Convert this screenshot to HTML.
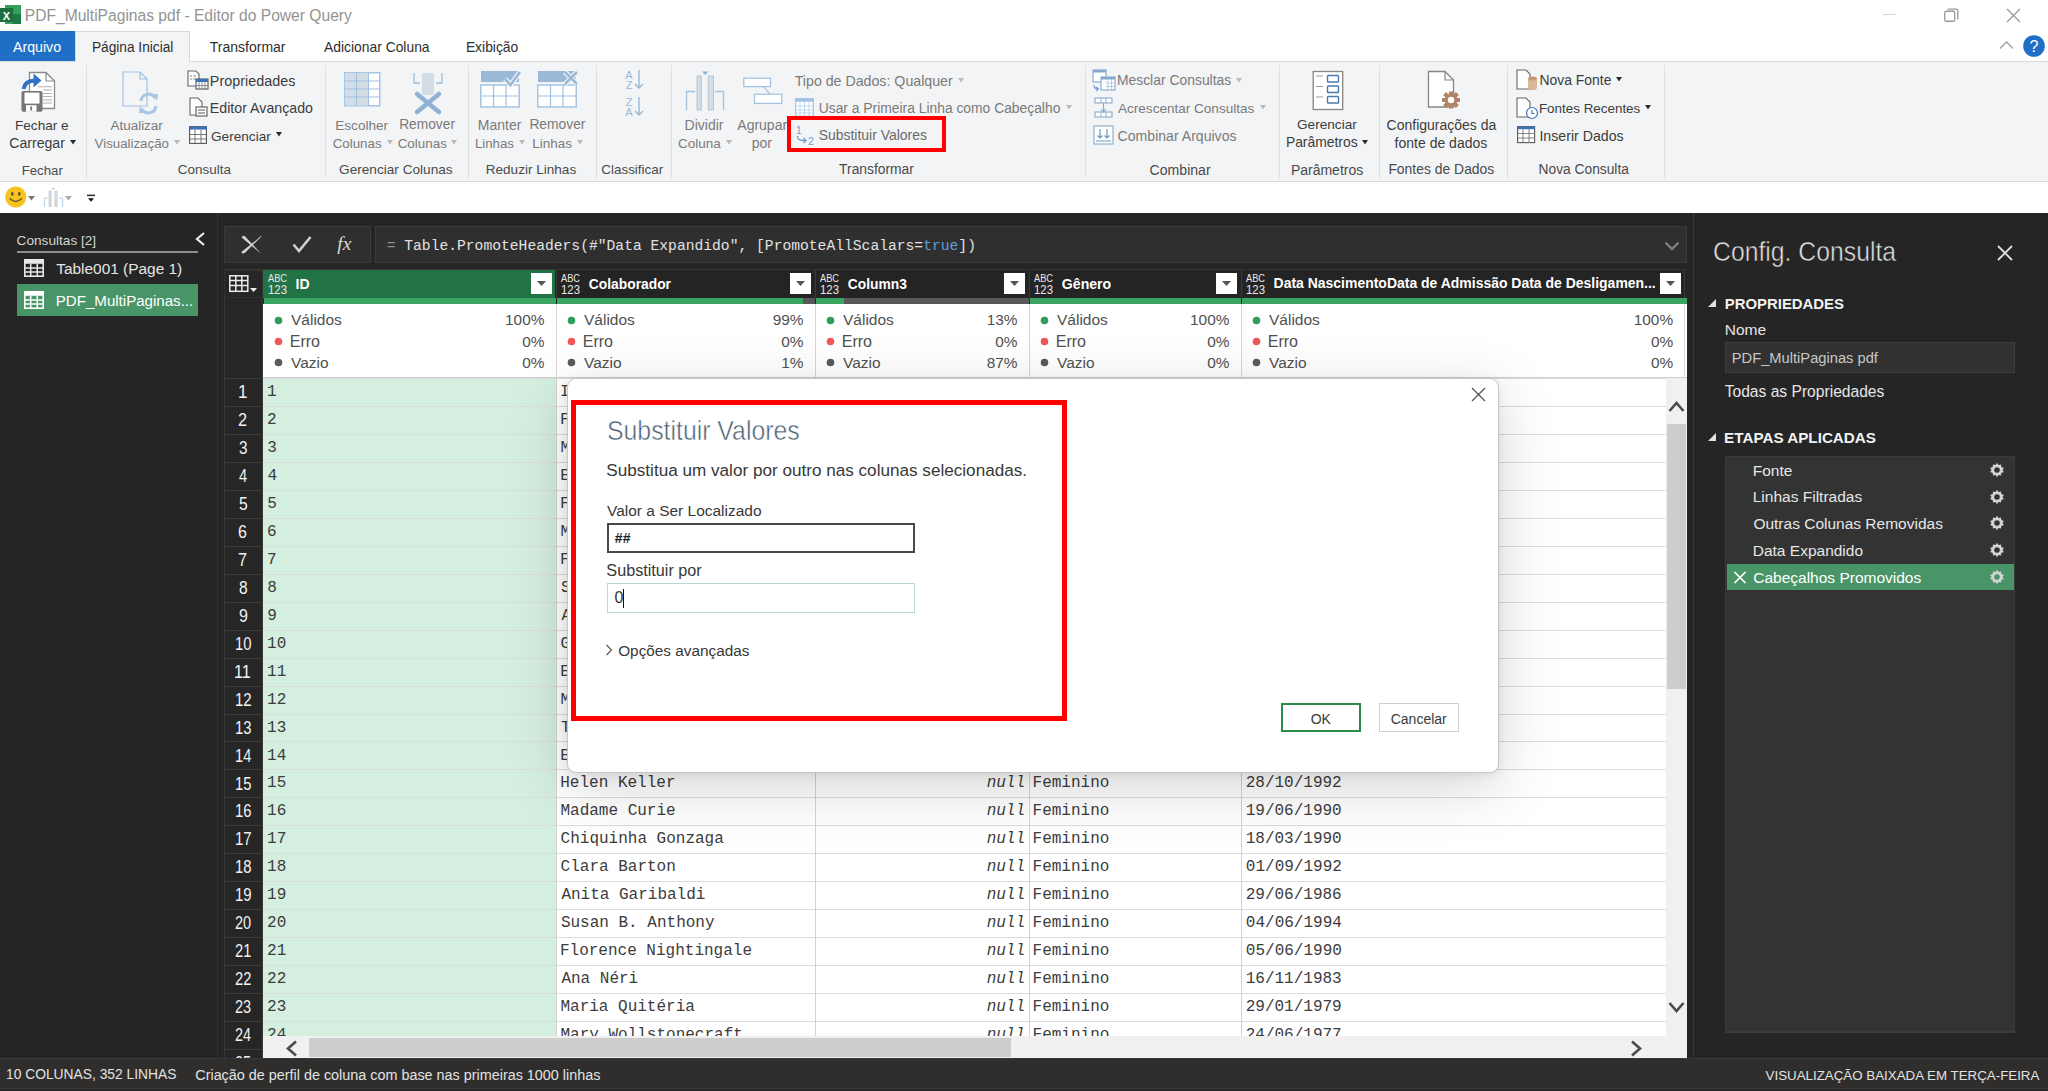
<!DOCTYPE html>
<html><head><meta charset="utf-8"><title>Power Query</title>
<style>
html,body{margin:0;padding:0;}
body{width:2048px;height:1091px;position:relative;overflow:hidden;background:#252525;font-family:"Liberation Sans",sans-serif;}
.r{position:absolute;display:block;}
.t{position:absolute;white-space:nowrap;line-height:1;}
svg.r{overflow:visible;}
</style></head><body>
<div class="r" style="left:0px;top:0px;width:2048px;height:31px;background:#ffffff;"></div>
<svg class="r" style="left:0px;top:4px;" width="22" height="22" viewBox="0 0 22 22"><rect x="5" y="1" width="16" height="19" fill="#33a05c"/><rect x="13" y="10" width="8" height="10" fill="#1e7a44"/><rect x="0" y="4" width="13" height="14" fill="#1d6f3f"/><text x="6.5" y="15.5" font-family="Liberation Sans" font-weight="bold" font-size="11" fill="#fff" text-anchor="middle">X</text></svg>
<div class="t" style="left:24.75px;top:8.28px;font-size:15.62px;color:#939393;font-weight:normal;font-style:normal;font-family:'Liberation Sans', sans-serif;">PDF_MultiPaginas pdf - Editor do Power Query</div>
<div class="r" style="left:1883px;top:14px;width:13px;height:1px;background:#d6d6d6;"></div>
<svg class="r" style="left:1944px;top:8px;" width="15" height="15" viewBox="0 0 15 15"><rect x="0.75" y="3.25" width="10" height="10" rx="1.5" fill="none" stroke="#9a9a9a" stroke-width="1.3"/><path d="M3.5 1.2 H12 Q13.8 1.2 13.8 3 V11.5" fill="none" stroke="#9a9a9a" stroke-width="1.3"/></svg>
<svg class="r" style="left:2006px;top:8px;" width="15" height="15" viewBox="0 0 15 15"><path d="M1 1 L14 14 M14 1 L1 14" stroke="#9a9a9a" stroke-width="1.3"/></svg>
<div class="r" style="left:0px;top:31px;width:2048px;height:30px;background:#ffffff;"></div>
<div class="r" style="left:0px;top:31px;width:75px;height:30px;background:#1f6fc6;"></div>
<div class="t" style="left:13.00px;top:40.31px;font-size:14.16px;color:#ffffff;font-weight:normal;font-style:normal;font-family:'Liberation Sans', sans-serif;">Arquivo</div>
<div class="r" style="left:75px;top:31px;width:115px;height:31px;background:#f3f4f6;border:1px solid #d8d8d8;border-bottom:none;box-sizing:border-box;"></div>
<div class="t" style="left:91.90px;top:40.69px;font-size:13.71px;color:#2e2e2e;font-weight:normal;font-style:normal;font-family:'Liberation Sans', sans-serif;">Página Inicial</div>
<div class="t" style="left:209.72px;top:40.43px;font-size:14.03px;color:#2e2e2e;font-weight:normal;font-style:normal;font-family:'Liberation Sans', sans-serif;">Transformar</div>
<div class="t" style="left:324.00px;top:40.57px;font-size:13.86px;color:#2e2e2e;font-weight:normal;font-style:normal;font-family:'Liberation Sans', sans-serif;">Adicionar Coluna</div>
<div class="t" style="left:465.89px;top:40.56px;font-size:13.87px;color:#2e2e2e;font-weight:normal;font-style:normal;font-family:'Liberation Sans', sans-serif;">Exibição</div>
<svg class="r" style="left:1999px;top:40px;" width="15" height="10" viewBox="0 0 15 10"><path d="M1 8.5 L7.5 2 L14 8.5" fill="none" stroke="#a0a0a0" stroke-width="1.4"/></svg>
<svg class="r" style="left:2023px;top:35px;" width="22" height="22" viewBox="0 0 22 22"><circle cx="11" cy="11" r="10.8" fill="#1f6fc6"/><text x="11" y="17" font-family="Liberation Sans" font-size="16" fill="#fff" text-anchor="middle">?</text></svg>
<div class="r" style="left:0px;top:61px;width:2048px;height:121px;background:#f3f4f6;border-top:1px solid #dcdcdc;border-bottom:1px solid #d9d9d9;box-sizing:border-box;"></div>
<div class="r" style="left:76px;top:61px;width:113px;height:1px;background:#f3f4f6;"></div>
<div class="r" style="left:86px;top:65px;width:1px;height:113px;background:#dfe0e2;"></div>
<div class="r" style="left:325px;top:65px;width:1px;height:113px;background:#dfe0e2;"></div>
<div class="r" style="left:468px;top:65px;width:1px;height:113px;background:#dfe0e2;"></div>
<div class="r" style="left:596px;top:65px;width:1px;height:113px;background:#dfe0e2;"></div>
<div class="r" style="left:671px;top:65px;width:1px;height:113px;background:#dfe0e2;"></div>
<div class="r" style="left:1085px;top:65px;width:1px;height:113px;background:#dfe0e2;"></div>
<div class="r" style="left:1279px;top:65px;width:1px;height:113px;background:#dfe0e2;"></div>
<div class="r" style="left:1379px;top:65px;width:1px;height:113px;background:#dfe0e2;"></div>
<div class="r" style="left:1507px;top:65px;width:1px;height:113px;background:#dfe0e2;"></div>
<div class="r" style="left:1664px;top:65px;width:1px;height:113px;background:#dfe0e2;"></div>
<svg class="r" style="left:18px;top:70px;" width="40" height="46" viewBox="0 0 40 46"><path d="M11.5 2.5 H28 L36.5 11 V38.5 H11.5 Z" fill="#fff" stroke="#8a8a8a" stroke-width="1.3"/><path d="M28 2.5 V11 H36.5" fill="none" stroke="#8a8a8a" stroke-width="1.2"/><path d="M20 16.7 H34 M25 20 H34 M25 23.5 H34 M25 26.5 H34 M25 30 H34 M25 33 H34" stroke="#b0b0b0" stroke-width="1.1"/><rect x="3.5" y="21" width="21" height="20.8" rx="1.8" fill="#77757a"/><rect x="6.5" y="22.6" width="15" height="11" fill="#fff"/><rect x="8" y="35.2" width="10.5" height="6.6" fill="#fff"/><rect x="12.3" y="36.5" width="1.8" height="4" fill="#77757a"/><path d="M5.5 19 Q7 10.5 17 10.5" fill="none" stroke="#2f72c2" stroke-width="3.8"/><path d="M15.5 3.5 L23.5 10.5 L15.5 17.5 Z" fill="#2f72c2"/></svg>
<div class="t" style="left:15.01px;top:118.51px;font-size:13.58px;color:#3c3c3c;font-weight:normal;font-style:normal;font-family:'Liberation Sans', sans-serif;">Fechar e</div>
<div class="t" style="left:9.30px;top:136.27px;font-size:14.09px;color:#3c3c3c;font-weight:normal;font-style:normal;font-family:'Liberation Sans', sans-serif;">Carregar</div>
<svg class="r" style="left:69.5px;top:139.5px;" width="7" height="5" viewBox="0 0 7 5"><path d="M0 0 H6 L3.0 4.5 Z" fill="#2b2b2b"/></svg>
<div class="t" style="left:21.64px;top:163.59px;font-size:13.25px;color:#4a4a4a;font-weight:normal;font-style:normal;font-family:'Liberation Sans', sans-serif;">Fechar</div>
<svg class="r" style="left:118px;top:70px;" width="44" height="46" viewBox="0 0 44 46"><path d="M5 2 H22 L29 9 V36 H5 Z" fill="none" stroke="#9fc1e3" stroke-width="1.2"/><path d="M22 2 V9 H29" fill="none" stroke="#9fc1e3" stroke-width="1.2"/><path d="M23 31 A7.5 7.5 0 0 1 37 28" fill="none" stroke="#a9c6e2" stroke-width="3"/><path d="M38 36 A7.5 7.5 0 0 1 24 39" fill="none" stroke="#a9c6e2" stroke-width="3"/><path d="M34 24 L40 24 L39 31 Z M27 43 L21 43 L22 36Z" fill="#a9c6e2"/></svg>
<div class="t" style="left:110.40px;top:118.58px;font-size:13.49px;color:#7a7a7a;font-weight:normal;font-style:normal;font-family:'Liberation Sans', sans-serif;">Atualizar</div>
<div class="t" style="left:94.60px;top:136.95px;font-size:13.29px;color:#7a7a7a;font-weight:normal;font-style:normal;font-family:'Liberation Sans', sans-serif;">Visualização</div>
<svg class="r" style="left:174.3px;top:139.5px;" width="7" height="5" viewBox="0 0 7 5"><path d="M0 0 H6 L3.0 4.5 Z" fill="#b9b9b9"/></svg>
<svg class="r" style="left:187px;top:70px;" width="22" height="20" viewBox="0 0 22 20"><path d="M1 1 H9 L12 4 V16 H1 Z" fill="#fff" stroke="#666" stroke-width="1.1"/><path d="M3 6 H5 M3 9 H5 M6 6 H9 M6 9 H9" stroke="#888" stroke-width="1"/><rect x="9" y="9" width="12" height="10" fill="#fff" stroke="#555" stroke-width="1.1"/><rect x="9" y="9" width="12" height="3" fill="#3d73b9"/><path d="M12 12 V19 M15 12 V19 M18 12 V19 M9 15.5 H21" stroke="#777" stroke-width="0.8"/></svg>
<div class="t" style="left:209.85px;top:73.72px;font-size:14.39px;color:#3c3c3c;font-weight:normal;font-style:normal;font-family:'Liberation Sans', sans-serif;">Propriedades</div>
<svg class="r" style="left:189px;top:97px;" width="20" height="21" viewBox="0 0 20 21"><path d="M1 1 H9 L13 5 V18 H1 Z" fill="#fff" stroke="#666" stroke-width="1.1"/><rect x="7" y="10" width="11" height="9" fill="#fff" stroke="#555" stroke-width="1.1"/><path d="M9 13 H16 M9 16 H16" stroke="#555" stroke-width="1"/></svg>
<div class="t" style="left:209.87px;top:101.49px;font-size:14.19px;color:#3c3c3c;font-weight:normal;font-style:normal;font-family:'Liberation Sans', sans-serif;">Editor Avançado</div>
<svg class="r" style="left:189px;top:126px;" width="18" height="18" viewBox="0 0 18 18"><rect x="0.6" y="0.6" width="16.8" height="16.8" fill="#fff" stroke="#555" stroke-width="1.1"/><rect x="0.6" y="0.6" width="16.8" height="3" fill="#3d73b9"/><path d="M6 4 V17 M12 4 V17 M1 8.5 H17 M1 13 H17" stroke="#666" stroke-width="0.9"/></svg>
<div class="t" style="left:211.02px;top:129.58px;font-size:13.61px;color:#3c3c3c;font-weight:normal;font-style:normal;font-family:'Liberation Sans', sans-serif;">Gerenciar</div>
<svg class="r" style="left:276.4px;top:132px;" width="7" height="5" viewBox="0 0 7 5"><path d="M0 0 H6 L3.0 4.5 Z" fill="#2b2b2b"/></svg>
<div class="t" style="left:177.83px;top:163.41px;font-size:13.46px;color:#4a4a4a;font-weight:normal;font-style:normal;font-family:'Liberation Sans', sans-serif;">Consulta</div>
<svg class="r" style="left:344px;top:72px;" width="38" height="36" viewBox="0 0 38 36"><rect x="0.8" y="0.8" width="35" height="33" fill="#fff" stroke="#9fc1e3" stroke-width="1.4"/><rect x="1.5" y="1.5" width="23" height="32" fill="#d3dde6"/><path d="M12.5 1 V34 M24.5 1 V34 M1 9 H36 M1 17 H36 M1 25 H36" stroke="#9fc1e3" stroke-width="1.1"/></svg>
<div class="t" style="left:335.32px;top:118.52px;font-size:13.56px;color:#7a7a7a;font-weight:normal;font-style:normal;font-family:'Liberation Sans', sans-serif;">Escolher</div>
<div class="t" style="left:332.63px;top:136.88px;font-size:13.37px;color:#7a7a7a;font-weight:normal;font-style:normal;font-family:'Liberation Sans', sans-serif;">Colunas</div>
<svg class="r" style="left:386.5px;top:139.5px;" width="7" height="5" viewBox="0 0 7 5"><path d="M0 0 H6 L3.0 4.5 Z" fill="#b9b9b9"/></svg>
<svg class="r" style="left:413px;top:72px;" width="30" height="42" viewBox="0 0 30 42"><path d="M1 1 V11 H7 M29 1 V11 H23" fill="none" stroke="#9fc1e3" stroke-width="1.4"/><rect x="9" y="1" width="12" height="22" fill="#d3dde6"/><path d="M4 22 L26 40 M26 22 L4 40" stroke="#8fb2d4" stroke-width="4.5" stroke-linecap="round"/></svg>
<div class="t" style="left:399.20px;top:118.36px;font-size:13.75px;color:#7a7a7a;font-weight:normal;font-style:normal;font-family:'Liberation Sans', sans-serif;">Remover</div>
<div class="t" style="left:397.63px;top:136.83px;font-size:13.43px;color:#7a7a7a;font-weight:normal;font-style:normal;font-family:'Liberation Sans', sans-serif;">Colunas</div>
<svg class="r" style="left:451.3px;top:139.5px;" width="7" height="5" viewBox="0 0 7 5"><path d="M0 0 H6 L3.0 4.5 Z" fill="#b9b9b9"/></svg>
<div class="t" style="left:339.12px;top:163.28px;font-size:13.61px;color:#4a4a4a;font-weight:normal;font-style:normal;font-family:'Liberation Sans', sans-serif;">Gerenciar Colunas</div>
<svg class="r" style="left:480px;top:70px;" width="42" height="40" viewBox="0 0 42 40"><rect x="1" y="1" width="38" height="11" fill="#9ab9d6"/><rect x="0.8" y="15" width="38.4" height="22" fill="#fff" stroke="#9fc1e3" stroke-width="1.4"/><path d="M13.5 15 V37 M26 15 V37 M1 26 H39" stroke="#9fc1e3" stroke-width="1.2"/><path d="M25 9 L30.5 15 L40 2" fill="none" stroke="#f3f4f6" stroke-width="5"/><path d="M25 9 L30.5 15 L40 2" fill="none" stroke="#9ab9d6" stroke-width="2.6"/></svg>
<div class="t" style="left:477.84px;top:118.15px;font-size:14.00px;color:#7a7a7a;font-weight:normal;font-style:normal;font-family:'Liberation Sans', sans-serif;">Manter</div>
<div class="t" style="left:474.94px;top:136.98px;font-size:13.25px;color:#7a7a7a;font-weight:normal;font-style:normal;font-family:'Liberation Sans', sans-serif;">Linhas</div>
<svg class="r" style="left:518.7px;top:139.5px;" width="7" height="5" viewBox="0 0 7 5"><path d="M0 0 H6 L3.0 4.5 Z" fill="#b9b9b9"/></svg>
<svg class="r" style="left:537px;top:70px;" width="42" height="40" viewBox="0 0 42 40"><rect x="1" y="1" width="38" height="11" fill="#9ab9d6"/><rect x="0.8" y="15" width="38.4" height="22" fill="#fff" stroke="#9fc1e3" stroke-width="1.4"/><path d="M13.5 15 V37 M26 15 V37 M1 26 H39" stroke="#9fc1e3" stroke-width="1.2"/><path d="M28 2 L40 14 M40 2 L28 14" stroke="#f3f4f6" stroke-width="5"/><path d="M28 2 L40 14 M40 2 L28 14" stroke="#9ab9d6" stroke-width="2.6"/></svg>
<div class="t" style="left:529.39px;top:118.30px;font-size:13.83px;color:#7a7a7a;font-weight:normal;font-style:normal;font-family:'Liberation Sans', sans-serif;">Remover</div>
<div class="t" style="left:532.33px;top:136.83px;font-size:13.43px;color:#7a7a7a;font-weight:normal;font-style:normal;font-family:'Liberation Sans', sans-serif;">Linhas</div>
<svg class="r" style="left:576.6px;top:139.5px;" width="7" height="5" viewBox="0 0 7 5"><path d="M0 0 H6 L3.0 4.5 Z" fill="#b9b9b9"/></svg>
<div class="t" style="left:485.71px;top:163.32px;font-size:13.57px;color:#4a4a4a;font-weight:normal;font-style:normal;font-family:'Liberation Sans', sans-serif;">Reduzir Linhas</div>
<svg class="r" style="left:623px;top:69px;" width="22" height="50" viewBox="0 0 22 50"><text x="6" y="10" font-family="Liberation Sans" font-size="11" fill="#9ab9d6" text-anchor="middle">A</text><text x="6" y="20" font-family="Liberation Sans" font-size="11" fill="#9ab9d6" text-anchor="middle">Z</text><path d="M16 1 V19 M12 15 L16 19 L20 15" fill="none" stroke="#9ab9d6" stroke-width="1.4"/><text x="6" y="37" font-family="Liberation Sans" font-size="11" fill="#9ab9d6" text-anchor="middle">Z</text><text x="6" y="47" font-family="Liberation Sans" font-size="11" fill="#9ab9d6" text-anchor="middle">A</text><path d="M16 28 V46 M12 42 L16 46 L20 42" fill="none" stroke="#9ab9d6" stroke-width="1.4"/></svg>
<div class="t" style="left:601.33px;top:163.45px;font-size:13.41px;color:#4a4a4a;font-weight:normal;font-style:normal;font-family:'Liberation Sans', sans-serif;">Classificar</div>
<svg class="r" style="left:684px;top:69px;" width="44" height="44" viewBox="0 0 44 44"><path d="M2.5 41 V22.5 H11 M39.5 41 V22.5 H31" fill="none" stroke="#a3c3e3" stroke-width="1.3"/><rect x="13" y="7" width="4.3" height="34" fill="#d3dde3" stroke="#a7c0d6" stroke-width="0.8"/><rect x="24.2" y="7" width="5.4" height="34" fill="#d3dde3" stroke="#a7c0d6" stroke-width="0.8"/><path d="M18 2.5 H24.5 L21.25 6 Z" fill="#8fb2d4"/></svg>
<div class="t" style="left:684.59px;top:118.15px;font-size:14.00px;color:#7a7a7a;font-weight:normal;font-style:normal;font-family:'Liberation Sans', sans-serif;">Dividir</div>
<div class="t" style="left:678.03px;top:136.79px;font-size:13.48px;color:#7a7a7a;font-weight:normal;font-style:normal;font-family:'Liberation Sans', sans-serif;">Coluna</div>
<svg class="r" style="left:725.7px;top:139.5px;" width="7" height="5" viewBox="0 0 7 5"><path d="M0 0 H6 L3.0 4.5 Z" fill="#b9b9b9"/></svg>
<svg class="r" style="left:742px;top:77px;" width="42" height="28" viewBox="0 0 42 28"><rect x="1.8" y="1.2" width="26.7" height="8.4" fill="#fff" stroke="#a3c3e3" stroke-width="1.3"/><rect x="12.5" y="17.2" width="27.3" height="9.2" fill="#fff" stroke="#a3c3e3" stroke-width="1.3"/><path d="M21.5 9.6 L28 17.2" stroke="#a3c3e3" stroke-width="1.3"/></svg>
<div class="t" style="left:737.30px;top:118.15px;font-size:14.00px;color:#7a7a7a;font-weight:normal;font-style:normal;font-family:'Liberation Sans', sans-serif;">Agrupar</div>
<div class="t" style="left:751.65px;top:136.35px;font-size:14.00px;color:#7a7a7a;font-weight:normal;font-style:normal;font-family:'Liberation Sans', sans-serif;">por</div>
<div class="t" style="left:794.72px;top:73.88px;font-size:14.19px;color:#7a7a7a;font-weight:normal;font-style:normal;font-family:'Liberation Sans', sans-serif;">Tipo de Dados: Qualquer</div>
<svg class="r" style="left:958px;top:77.5px;" width="7" height="5" viewBox="0 0 7 5"><path d="M0 0 H6 L3.0 4.5 Z" fill="#b9b9b9"/></svg>
<svg class="r" style="left:795px;top:98px;" width="19" height="19" viewBox="0 0 19 19"><rect x="0.7" y="0.7" width="17.6" height="17.6" fill="#fff" stroke="#9fc1e3" stroke-width="1.2"/><rect x="0.7" y="0.7" width="17.6" height="3" fill="#9fc1e3"/><path d="M5 4 V18 M9.5 4 V18 M14 4 V18 M1 8 H18 M1 12 H18 M1 15 H18" stroke="#b9d2ea" stroke-width="0.9"/></svg>
<div class="t" style="left:818.73px;top:101.77px;font-size:13.85px;color:#7a7a7a;font-weight:normal;font-style:normal;font-family:'Liberation Sans', sans-serif;">Usar a Primeira Linha como Cabeçalho</div>
<svg class="r" style="left:1066px;top:105px;" width="7" height="5" viewBox="0 0 7 5"><path d="M0 0 H6 L3.0 4.5 Z" fill="#b9b9b9"/></svg>
<svg class="r" style="left:795px;top:124px;" width="22" height="22" viewBox="0 0 22 22"><text x="1" y="10" font-family="Liberation Sans" font-size="10" fill="#6f9fd0">1</text><text x="13" y="20.5" font-family="Liberation Sans" font-size="10.5" fill="#6f9fd0">2</text><path d="M2.5 12 Q2.5 16.5 7.5 16.5 H11 M8.5 14 L11 16.5 L8.5 19" fill="none" stroke="#6f9fd0" stroke-width="1.3"/></svg>
<div class="t" style="left:818.74px;top:129.29px;font-size:13.95px;color:#6a6a6a;font-weight:normal;font-style:normal;font-family:'Liberation Sans', sans-serif;">Substituir Valores</div>
<div class="t" style="left:839.12px;top:163.08px;font-size:13.84px;color:#4a4a4a;font-weight:normal;font-style:normal;font-family:'Liberation Sans', sans-serif;">Transformar</div>
<svg class="r" style="left:1092px;top:69px;" width="24" height="23" viewBox="0 0 24 23"><rect x="1" y="1" width="13" height="12" fill="#fff" stroke="#85a9cc" stroke-width="1.1"/><rect x="1" y="1" width="13" height="2.5" fill="#85a9cc"/><rect x="9" y="8" width="14" height="13" fill="#fff" stroke="#85a9cc" stroke-width="1.1"/><rect x="9" y="8" width="14" height="2.5" fill="#85a9cc"/><path d="M14 14 H23 M14 17.5 H23 M16 10 V21 M19.5 10 V21" stroke="#a5c2dd" stroke-width="0.8"/><path d="M2 16 Q2 20 6 20 M4 18 L6.5 20 L4 22" fill="none" stroke="#6f9fd0" stroke-width="1.2"/></svg>
<div class="t" style="left:1116.89px;top:74.11px;font-size:13.92px;color:#7a7a7a;font-weight:normal;font-style:normal;font-family:'Liberation Sans', sans-serif;">Mesclar Consultas</div>
<svg class="r" style="left:1236px;top:77.5px;" width="7" height="5" viewBox="0 0 7 5"><path d="M0 0 H6 L3.0 4.5 Z" fill="#b9b9b9"/></svg>
<svg class="r" style="left:1094px;top:97px;" width="20" height="22" viewBox="0 0 20 22"><rect x="1" y="1" width="17" height="5" fill="#fff" stroke="#85a9cc" stroke-width="1.1"/><rect x="1" y="15" width="17" height="5" fill="#fff" stroke="#85a9cc" stroke-width="1.1"/><path d="M7 1 V6 M12 1 V6 M7 15 V20 M12 15 V20" stroke="#85a9cc" stroke-width="0.9"/><path d="M9.5 6 V15 M7 12 L9.5 15 L12 12" fill="none" stroke="#85a9cc" stroke-width="1.1"/></svg>
<div class="t" style="left:1118.00px;top:102.02px;font-size:13.56px;color:#7a7a7a;font-weight:normal;font-style:normal;font-family:'Liberation Sans', sans-serif;">Acrescentar Consultas</div>
<svg class="r" style="left:1260px;top:105px;" width="7" height="5" viewBox="0 0 7 5"><path d="M0 0 H6 L3.0 4.5 Z" fill="#b9b9b9"/></svg>
<svg class="r" style="left:1093px;top:125px;" width="22" height="21" viewBox="0 0 22 21"><rect x="1" y="1" width="19" height="18" fill="#fff" stroke="#85a9cc" stroke-width="1.1"/><path d="M7 4 V13 M4.5 10.5 L7 13 L9.5 10.5 M14 4 V13 M11.5 10.5 L14 13 L16.5 10.5 M3 16 H18" fill="none" stroke="#6f98c2" stroke-width="1.2"/></svg>
<div class="t" style="left:1117.60px;top:129.17px;font-size:14.09px;color:#7a7a7a;font-weight:normal;font-style:normal;font-family:'Liberation Sans', sans-serif;">Combinar Arquivos</div>
<div class="t" style="left:1149.60px;top:162.87px;font-size:14.09px;color:#4a4a4a;font-weight:normal;font-style:normal;font-family:'Liberation Sans', sans-serif;">Combinar</div>
<svg class="r" style="left:1312px;top:70px;" width="32" height="41" viewBox="0 0 32 41"><rect x="1.2" y="1.5" width="29.5" height="38" fill="#fff" stroke="#8a8580" stroke-width="1.3"/><path d="M4 6 H11 M4 16.5 H11 M4 27 H11" stroke="#9a9a9a" stroke-width="1.1"/><rect x="15.5" y="5.5" width="11" height="6.5" rx="0.8" fill="#fff" stroke="#4a79ad" stroke-width="1.4"/><rect x="15.5" y="16" width="11" height="6.5" rx="0.8" fill="#fff" stroke="#4a79ad" stroke-width="1.4"/><rect x="15.5" y="26.5" width="11" height="6.5" rx="0.8" fill="#fff" stroke="#4a79ad" stroke-width="1.4"/></svg>
<div class="t" style="left:1297.02px;top:118.48px;font-size:13.61px;color:#3c3c3c;font-weight:normal;font-style:normal;font-family:'Liberation Sans', sans-serif;">Gerenciar</div>
<div class="t" style="left:1285.89px;top:136.44px;font-size:13.90px;color:#3c3c3c;font-weight:normal;font-style:normal;font-family:'Liberation Sans', sans-serif;">Parâmetros</div>
<svg class="r" style="left:1362px;top:140px;" width="7" height="5" viewBox="0 0 7 5"><path d="M0 0 H6 L3.0 4.5 Z" fill="#2b2b2b"/></svg>
<div class="t" style="left:1290.88px;top:162.95px;font-size:14.00px;color:#4a4a4a;font-weight:normal;font-style:normal;font-family:'Liberation Sans', sans-serif;">Parâmetros</div>
<svg class="r" style="left:1427px;top:70px;" width="38" height="42" viewBox="0 0 38 42"><path d="M1.5 1.5 H18 L26.5 10 V37 H1.5 Z" fill="#fff" stroke="#8a8580" stroke-width="1.3"/><path d="M18 1.5 V10 H26.5" fill="none" stroke="#8a8580" stroke-width="1.2"/><path d="M24 21.5 V25 M24 35 V38.5 M15 30 H18.5 M29.5 30 H33 M17.6 23.6 L20 26 M28 34 L30.4 36.4 M30.4 23.6 L28 26 M20 34 L17.6 36.4" stroke="#b08466" stroke-width="4.2"/><circle cx="24" cy="30" r="6.3" fill="#b08466"/><circle cx="24" cy="30" r="3.2" fill="#fff"/></svg>
<div class="t" style="left:1386.60px;top:118.14px;font-size:14.01px;color:#3c3c3c;font-weight:normal;font-style:normal;font-family:'Liberation Sans', sans-serif;">Configurações da</div>
<div class="t" style="left:1394.62px;top:136.35px;font-size:14.00px;color:#3c3c3c;font-weight:normal;font-style:normal;font-family:'Liberation Sans', sans-serif;">fonte de dados</div>
<div class="t" style="left:1388.39px;top:163.01px;font-size:13.92px;color:#4a4a4a;font-weight:normal;font-style:normal;font-family:'Liberation Sans', sans-serif;">Fontes de Dados</div>
<svg class="r" style="left:1516px;top:69px;" width="23" height="22" viewBox="0 0 23 22"><path d="M1 1 H10 L14 5 V20 H1 Z" fill="#fff" stroke="#666" stroke-width="1.1"/><rect x="12" y="9" width="9" height="12" rx="3" fill="#d8b79a"/><ellipse cx="16.5" cy="9.5" rx="4.5" ry="2" fill="#c49a74"/></svg>
<div class="t" style="left:1539.38px;top:74.09px;font-size:13.95px;color:#3c3c3c;font-weight:normal;font-style:normal;font-family:'Liberation Sans', sans-serif;">Nova Fonte</div>
<svg class="r" style="left:1616px;top:77px;" width="7" height="5" viewBox="0 0 7 5"><path d="M0 0 H6 L3.0 4.5 Z" fill="#2b2b2b"/></svg>
<svg class="r" style="left:1516px;top:97px;" width="23" height="23" viewBox="0 0 23 23"><path d="M1 1 H10 L14 5 V20 H1 Z" fill="#fff" stroke="#666" stroke-width="1.1"/><circle cx="16" cy="16" r="5.5" fill="#fff" stroke="#3d73b9" stroke-width="1.2"/><path d="M16 13 V16.5 H18.5" fill="none" stroke="#3d73b9" stroke-width="1.1"/></svg>
<div class="t" style="left:1538.93px;top:102.14px;font-size:13.42px;color:#3c3c3c;font-weight:normal;font-style:normal;font-family:'Liberation Sans', sans-serif;">Fontes Recentes</div>
<svg class="r" style="left:1645px;top:104.5px;" width="7" height="5" viewBox="0 0 7 5"><path d="M0 0 H6 L3.0 4.5 Z" fill="#2b2b2b"/></svg>
<svg class="r" style="left:1517px;top:126px;" width="19" height="18" viewBox="0 0 19 18"><rect x="0.6" y="0.6" width="17" height="16" fill="#fff" stroke="#555" stroke-width="1.1"/><rect x="0.6" y="0.6" width="17" height="2.6" fill="#3d73b9"/><path d="M6 3 V17 M12 3 V17 M1 7.5 H18 M1 12 H18" stroke="#777" stroke-width="0.9"/></svg>
<div class="t" style="left:1539.43px;top:129.11px;font-size:14.16px;color:#3c3c3c;font-weight:normal;font-style:normal;font-family:'Liberation Sans', sans-serif;">Inserir Dados</div>
<div class="t" style="left:1538.60px;top:163.14px;font-size:13.77px;color:#4a4a4a;font-weight:normal;font-style:normal;font-family:'Liberation Sans', sans-serif;">Nova Consulta</div>
<div class="r" style="left:787px;top:116px;width:159px;height:36px;background:transparent;border:4.5px solid #ff0000;box-sizing:border-box;"></div>
<div class="r" style="left:0px;top:182px;width:2048px;height:31px;background:#ffffff;"></div>
<svg class="r" style="left:5px;top:186px;" width="24" height="24" viewBox="0 0 24 24"><circle cx="10.8" cy="11" r="10.6" fill="#f7c31f"/><ellipse cx="7.3" cy="7.8" rx="1.3" ry="1.9" fill="#4d4a44"/><ellipse cx="14.3" cy="7.8" rx="1.3" ry="1.9" fill="#4d4a44"/><path d="M4.6 12.3 Q10.8 18.8 17 12.3" fill="none" stroke="#6b5a48" stroke-width="1.5"/></svg>
<svg class="r" style="left:28px;top:196px;" width="8" height="5" viewBox="0 0 8 5"><path d="M0 0 H7 L3.5 4.5 Z" fill="#777"/></svg>
<svg class="r" style="left:43px;top:187px;" width="22" height="21" viewBox="0 0 22 21"><path d="M1.5 20 V11 H5 M19.5 20 V11 H16" fill="none" stroke="#b4cfe8" stroke-width="1.1"/><rect x="5.5" y="3.5" width="3.3" height="16.5" fill="#d2d7da"/><rect x="11.3" y="3.5" width="3.3" height="16.5" fill="#d2d7da"/><path d="M8.8 1 H11.8 L10.3 2.8 Z" fill="#8fb2d4"/></svg>
<svg class="r" style="left:65px;top:196px;" width="8" height="5" viewBox="0 0 8 5"><path d="M0 0 H7 L3.5 4.5 Z" fill="#aaa"/></svg>
<svg class="r" style="left:87px;top:194px;" width="9" height="9" viewBox="0 0 9 9"><rect x="0" y="0.6" width="8" height="1.6" fill="#333"/><path d="M1 4.2 H7 L4 7.8 Z" fill="#111"/></svg>
<div class="r" style="left:0px;top:213px;width:2048px;height:845px;background:#252525;"></div>
<div class="r" style="left:217px;top:213px;width:1px;height:845px;background:#323232;"></div>
<div class="t" style="left:16.62px;top:234.05px;font-size:13.64px;color:#d4d4d4;font-weight:normal;font-style:normal;font-family:'Liberation Sans', sans-serif;">Consultas [2]</div>
<div class="r" style="left:17px;top:251px;width:181px;height:2px;background:#8e8e8e;"></div>
<svg class="r" style="left:194px;top:231px;" width="12" height="16" viewBox="0 0 12 16"><path d="M10 2 L3 8 L10 14" fill="none" stroke="#ececec" stroke-width="2.2"/></svg>
<svg class="r" style="left:24px;top:259px;" width="20" height="18" viewBox="0 0 20 18"><rect x="0.8" y="0.8" width="18.4" height="16.4" fill="none" stroke="#e8e8e8" stroke-width="1.6"/><rect x="0.8" y="0.8" width="18.4" height="4" fill="#e8e8e8"/><path d="M6.7 5 V17 M13.3 5 V17 M1 9 H19 M1 13 H19" stroke="#e8e8e8" stroke-width="1.5"/></svg>
<div class="t" style="left:56.19px;top:260.84px;font-size:15.43px;color:#e6e6e6;font-weight:normal;font-style:normal;font-family:'Liberation Sans', sans-serif;">Table001 (Page 1)</div>
<div class="r" style="left:17px;top:284px;width:181px;height:32px;background:#4a9568;"></div>
<svg class="r" style="left:24px;top:291px;" width="20" height="18" viewBox="0 0 20 18"><rect x="0.8" y="0.8" width="18.4" height="16.4" fill="none" stroke="#ffffff" stroke-width="1.6"/><rect x="0.8" y="0.8" width="18.4" height="4" fill="#ffffff"/><path d="M6.7 5 V17 M13.3 5 V17 M1 9 H19 M1 13 H19" stroke="#ffffff" stroke-width="1.5"/></svg>
<div class="t" style="left:55.79px;top:293.13px;font-size:15.09px;color:#ffffff;font-weight:normal;font-style:normal;font-family:'Liberation Sans', sans-serif;">PDF_MultiPaginas...</div>
<div class="r" style="left:224px;top:226px;width:147px;height:37px;background:#2f2f2f;border:1px solid #3a3a3a;box-sizing:border-box;"></div>
<svg class="r" style="left:241px;top:235px;" width="21" height="19" viewBox="0 0 21 19"><path d="M0.6 2.4 Q1.6 -0.2 4.2 1.4 L20.2 18.8 Z" fill="#d2d2d2"/><path d="M20.4 1 L4.2 17.4 Q1.4 19.8 0.4 17 Z" fill="#d2d2d2"/><path d="M20.4 1 L3 18" stroke="#d2d2d2" stroke-width="1"/></svg>
<svg class="r" style="left:292px;top:235px;" width="20" height="18" viewBox="0 0 20 18"><path d="M1.5 9.5 L7 16 L18.5 2" fill="none" stroke="#d0d0d0" stroke-width="2.6"/></svg>
<div class="t" style="left:337.31px;top:233.67px;font-size:19.50px;color:#d8d8d8;font-weight:normal;font-style:italic;font-family:'Liberation Serif', serif;">fx</div>
<div class="r" style="left:375px;top:226px;width:1312px;height:37px;background:#2f2f2f;border:1px solid #3a3a3a;box-sizing:border-box;"></div>
<div class="t" style="left:386.67px;top:239.27px;font-size:14.66px;color:#e2e2e2;font-weight:normal;font-style:normal;font-family:'Liberation Mono', monospace;"><span style="color:#8c8c8c">=</span> Table.PromoteHeaders(#"Data Expandido", [PromoteAllScalars=<span style="color:#5f9fdc">true</span>])</div>
<svg class="r" style="left:1664px;top:241px;" width="16" height="10" viewBox="0 0 16 10"><path d="M1.5 1.5 L8 8 L14.5 1.5" fill="none" stroke="#7c7c82" stroke-width="2.4"/></svg>
<div class="r" style="left:224px;top:269px;width:1463px;height:1px;background:#363636;"></div>
<div class="r" style="left:224px;top:270px;width:1463px;height:28px;background:#232323;"></div>
<div class="r" style="left:224px;top:270px;width:39px;height:28px;background:#262626;border:1px solid #303030;box-sizing:border-box;"></div>
<svg class="r" style="left:229px;top:275px;" width="30" height="20" viewBox="0 0 30 20"><rect x="0.8" y="0.8" width="18" height="15.5" fill="none" stroke="#ececec" stroke-width="1.5"/><path d="M6.8 1 V16 M12.8 1 V16 M1 5.5 H19 M1 10.5 H19" stroke="#ececec" stroke-width="1.5"/><path d="M21 13 H28 L24.5 17 Z" fill="#ececec"/></svg>
<div class="r" style="left:224px;top:298px;width:39px;height:760px;background:#262626;"></div>
<div class="r" style="left:224px;top:298px;width:1px;height:760px;background:#363636;"></div>
<div class="r" style="left:263px;top:270px;width:292px;height:28px;background:#217346;"></div>
<svg class="r" style="left:267px;top:273px;" width="22" height="22" viewBox="0 0 22 22"><text x="10.5" y="9" font-family="Liberation Sans" font-size="10.2" fill="#e8e8e8" text-anchor="middle" textLength="19" lengthAdjust="spacingAndGlyphs">ABC</text><text x="10.5" y="20.5" font-family="Liberation Sans" font-size="12.8" fill="#e8e8e8" text-anchor="middle" textLength="19" lengthAdjust="spacingAndGlyphs">123</text></svg>
<div class="t" style="left:295.56px;top:277.35px;font-size:14.00px;color:#ffffff;font-weight:bold;font-style:normal;font-family:'Liberation Sans', sans-serif;">ID</div>
<div class="r" style="left:531px;top:273px;width:21px;height:21px;background:#ffffff;"></div>
<svg class="r" style="left:536.5px;top:281px;" width="10" height="6" viewBox="0 0 10 6"><path d="M0 0 H9 L4.5 5 Z" fill="#555"/></svg>
<div class="r" style="left:557px;top:270px;width:258px;height:28px;background:#242424;"></div>
<svg class="r" style="left:560px;top:273px;" width="22" height="22" viewBox="0 0 22 22"><text x="10.5" y="9" font-family="Liberation Sans" font-size="10.2" fill="#e8e8e8" text-anchor="middle" textLength="19" lengthAdjust="spacingAndGlyphs">ABC</text><text x="10.5" y="20.5" font-family="Liberation Sans" font-size="12.8" fill="#e8e8e8" text-anchor="middle" textLength="19" lengthAdjust="spacingAndGlyphs">123</text></svg>
<div class="t" style="left:588.85px;top:277.50px;font-size:13.82px;color:#ffffff;font-weight:bold;font-style:normal;font-family:'Liberation Sans', sans-serif;">Colaborador</div>
<div class="r" style="left:790px;top:273px;width:21px;height:21px;background:#ffffff;"></div>
<svg class="r" style="left:795.5px;top:281px;" width="10" height="6" viewBox="0 0 10 6"><path d="M0 0 H9 L4.5 5 Z" fill="#555"/></svg>
<div class="r" style="left:816px;top:270px;width:213px;height:28px;background:#242424;"></div>
<svg class="r" style="left:819px;top:273px;" width="22" height="22" viewBox="0 0 22 22"><text x="10.5" y="9" font-family="Liberation Sans" font-size="10.2" fill="#e8e8e8" text-anchor="middle" textLength="19" lengthAdjust="spacingAndGlyphs">ABC</text><text x="10.5" y="20.5" font-family="Liberation Sans" font-size="12.8" fill="#e8e8e8" text-anchor="middle" textLength="19" lengthAdjust="spacingAndGlyphs">123</text></svg>
<div class="t" style="left:847.85px;top:277.51px;font-size:13.80px;color:#ffffff;font-weight:bold;font-style:normal;font-family:'Liberation Sans', sans-serif;">Column3</div>
<div class="r" style="left:1004px;top:273px;width:21px;height:21px;background:#ffffff;"></div>
<svg class="r" style="left:1009.5px;top:281px;" width="10" height="6" viewBox="0 0 10 6"><path d="M0 0 H9 L4.5 5 Z" fill="#555"/></svg>
<div class="r" style="left:1030px;top:270px;width:211px;height:28px;background:#242424;"></div>
<svg class="r" style="left:1033px;top:273px;" width="22" height="22" viewBox="0 0 22 22"><text x="10.5" y="9" font-family="Liberation Sans" font-size="10.2" fill="#e8e8e8" text-anchor="middle" textLength="19" lengthAdjust="spacingAndGlyphs">ABC</text><text x="10.5" y="20.5" font-family="Liberation Sans" font-size="12.8" fill="#e8e8e8" text-anchor="middle" textLength="19" lengthAdjust="spacingAndGlyphs">123</text></svg>
<div class="t" style="left:1061.84px;top:277.26px;font-size:14.11px;color:#ffffff;font-weight:bold;font-style:normal;font-family:'Liberation Sans', sans-serif;">Gênero</div>
<div class="r" style="left:1216px;top:273px;width:21px;height:21px;background:#ffffff;"></div>
<svg class="r" style="left:1221.5px;top:281px;" width="10" height="6" viewBox="0 0 10 6"><path d="M0 0 H9 L4.5 5 Z" fill="#555"/></svg>
<div class="r" style="left:1242px;top:270px;width:445px;height:28px;background:#242424;"></div>
<svg class="r" style="left:1245px;top:273px;" width="22" height="22" viewBox="0 0 22 22"><text x="10.5" y="9" font-family="Liberation Sans" font-size="10.2" fill="#e8e8e8" text-anchor="middle" textLength="19" lengthAdjust="spacingAndGlyphs">ABC</text><text x="10.5" y="20.5" font-family="Liberation Sans" font-size="12.8" fill="#e8e8e8" text-anchor="middle" textLength="19" lengthAdjust="spacingAndGlyphs">123</text></svg>
<div class="t" style="left:1273.56px;top:277.37px;font-size:13.97px;color:#ffffff;font-weight:bold;font-style:normal;font-family:'Liberation Sans', sans-serif;">Data NascimentoData de Admissão Data de Desligamen...</div>
<div class="r" style="left:1660px;top:273px;width:21px;height:21px;background:#ffffff;"></div>
<svg class="r" style="left:1665.5px;top:281px;" width="10" height="6" viewBox="0 0 10 6"><path d="M0 0 H9 L4.5 5 Z" fill="#555"/></svg>
<div class="r" style="left:556px;top:270px;width:1px;height:28px;background:#3a3a3a;"></div>
<div class="r" style="left:815px;top:270px;width:1px;height:28px;background:#3a3a3a;"></div>
<div class="r" style="left:1029px;top:270px;width:1px;height:28px;background:#3a3a3a;"></div>
<div class="r" style="left:1241px;top:270px;width:1px;height:28px;background:#3a3a3a;"></div>
<div class="r" style="left:1684px;top:270px;width:1px;height:28px;background:#3a3a3a;"></div>
<div class="r" style="left:264px;top:298px;width:292px;height:6px;background:#595959;"></div>
<div class="r" style="left:264px;top:298px;width:292px;height:6px;background:#3ba661;"></div>
<div class="r" style="left:557px;top:298px;width:258px;height:6px;background:#595959;"></div>
<div class="r" style="left:557px;top:298px;width:245.5px;height:6px;background:#3ba661;"></div>
<div class="r" style="left:816px;top:298px;width:213px;height:6px;background:#595959;"></div>
<div class="r" style="left:816px;top:298px;width:28px;height:6px;background:#3ba661;"></div>
<div class="r" style="left:1030px;top:298px;width:211px;height:6px;background:#595959;"></div>
<div class="r" style="left:1030px;top:298px;width:211px;height:6px;background:#3ba661;"></div>
<div class="r" style="left:1242px;top:298px;width:445px;height:6px;background:#595959;"></div>
<div class="r" style="left:1242px;top:298px;width:445px;height:6px;background:#3ba661;"></div>
<div class="r" style="left:263px;top:304px;width:1424px;height:74px;background:#ffffff;"></div>
<div class="r" style="left:263px;top:377px;width:1424px;height:1px;background:#cfcfcf;"></div>
<div class="r" style="left:1684px;top:304px;width:1px;height:74px;background:#d8d8d8;"></div>
<svg class="r" style="left:274px;top:0px;top:315.60px;" width="9" height="9" viewBox="0 0 9 9"><circle cx="4.5" cy="4.5" r="3.8" fill="#2e9d57"/></svg>
<div class="t" style="left:291.00px;top:312.17px;font-size:15.51px;color:#505050;font-weight:normal;font-style:normal;font-family:'Liberation Sans', sans-serif;">Válidos</div>
<div class="t" style="left:505.06px;top:312.26px;font-size:15.40px;color:#505050;font-weight:normal;font-style:normal;font-family:'Liberation Sans', sans-serif;">100%</div>
<svg class="r" style="left:274px;top:0px;top:336.95px;" width="9" height="9" viewBox="0 0 9 9"><circle cx="4.5" cy="4.5" r="3.8" fill="#f25757"/></svg>
<div class="t" style="left:289.71px;top:333.04px;font-size:16.07px;color:#505050;font-weight:normal;font-style:normal;font-family:'Liberation Sans', sans-serif;">Erro</div>
<div class="t" style="left:522.19px;top:333.61px;font-size:15.40px;color:#505050;font-weight:normal;font-style:normal;font-family:'Liberation Sans', sans-serif;">0%</div>
<svg class="r" style="left:274px;top:0px;top:358.30px;" width="9" height="9" viewBox="0 0 9 9"><circle cx="4.5" cy="4.5" r="3.8" fill="#565b60"/></svg>
<div class="t" style="left:291.00px;top:354.90px;font-size:15.47px;color:#505050;font-weight:normal;font-style:normal;font-family:'Liberation Sans', sans-serif;">Vazio</div>
<div class="t" style="left:522.19px;top:354.96px;font-size:15.40px;color:#505050;font-weight:normal;font-style:normal;font-family:'Liberation Sans', sans-serif;">0%</div>
<div class="r" style="left:556px;top:304px;width:1px;height:74px;background:#d6d6d6;"></div>
<svg class="r" style="left:567px;top:0px;top:315.60px;" width="9" height="9" viewBox="0 0 9 9"><circle cx="4.5" cy="4.5" r="3.8" fill="#2e9d57"/></svg>
<div class="t" style="left:584.00px;top:312.17px;font-size:15.51px;color:#505050;font-weight:normal;font-style:normal;font-family:'Liberation Sans', sans-serif;">Válidos</div>
<div class="t" style="left:772.63px;top:312.26px;font-size:15.40px;color:#505050;font-weight:normal;font-style:normal;font-family:'Liberation Sans', sans-serif;">99%</div>
<svg class="r" style="left:567px;top:0px;top:336.95px;" width="9" height="9" viewBox="0 0 9 9"><circle cx="4.5" cy="4.5" r="3.8" fill="#f25757"/></svg>
<div class="t" style="left:582.71px;top:333.04px;font-size:16.07px;color:#505050;font-weight:normal;font-style:normal;font-family:'Liberation Sans', sans-serif;">Erro</div>
<div class="t" style="left:781.19px;top:333.61px;font-size:15.40px;color:#505050;font-weight:normal;font-style:normal;font-family:'Liberation Sans', sans-serif;">0%</div>
<svg class="r" style="left:567px;top:0px;top:358.30px;" width="9" height="9" viewBox="0 0 9 9"><circle cx="4.5" cy="4.5" r="3.8" fill="#565b60"/></svg>
<div class="t" style="left:584.00px;top:354.90px;font-size:15.47px;color:#505050;font-weight:normal;font-style:normal;font-family:'Liberation Sans', sans-serif;">Vazio</div>
<div class="t" style="left:781.19px;top:354.96px;font-size:15.40px;color:#505050;font-weight:normal;font-style:normal;font-family:'Liberation Sans', sans-serif;">1%</div>
<div class="r" style="left:815px;top:304px;width:1px;height:74px;background:#d6d6d6;"></div>
<svg class="r" style="left:826px;top:0px;top:315.60px;" width="9" height="9" viewBox="0 0 9 9"><circle cx="4.5" cy="4.5" r="3.8" fill="#2e9d57"/></svg>
<div class="t" style="left:843.00px;top:312.17px;font-size:15.51px;color:#505050;font-weight:normal;font-style:normal;font-family:'Liberation Sans', sans-serif;">Válidos</div>
<div class="t" style="left:986.63px;top:312.26px;font-size:15.40px;color:#505050;font-weight:normal;font-style:normal;font-family:'Liberation Sans', sans-serif;">13%</div>
<svg class="r" style="left:826px;top:0px;top:336.95px;" width="9" height="9" viewBox="0 0 9 9"><circle cx="4.5" cy="4.5" r="3.8" fill="#f25757"/></svg>
<div class="t" style="left:841.71px;top:333.04px;font-size:16.07px;color:#505050;font-weight:normal;font-style:normal;font-family:'Liberation Sans', sans-serif;">Erro</div>
<div class="t" style="left:995.19px;top:333.61px;font-size:15.40px;color:#505050;font-weight:normal;font-style:normal;font-family:'Liberation Sans', sans-serif;">0%</div>
<svg class="r" style="left:826px;top:0px;top:358.30px;" width="9" height="9" viewBox="0 0 9 9"><circle cx="4.5" cy="4.5" r="3.8" fill="#565b60"/></svg>
<div class="t" style="left:843.00px;top:354.90px;font-size:15.47px;color:#505050;font-weight:normal;font-style:normal;font-family:'Liberation Sans', sans-serif;">Vazio</div>
<div class="t" style="left:986.63px;top:354.96px;font-size:15.40px;color:#505050;font-weight:normal;font-style:normal;font-family:'Liberation Sans', sans-serif;">87%</div>
<div class="r" style="left:1029px;top:304px;width:1px;height:74px;background:#d6d6d6;"></div>
<svg class="r" style="left:1040px;top:0px;top:315.60px;" width="9" height="9" viewBox="0 0 9 9"><circle cx="4.5" cy="4.5" r="3.8" fill="#2e9d57"/></svg>
<div class="t" style="left:1057.00px;top:312.17px;font-size:15.51px;color:#505050;font-weight:normal;font-style:normal;font-family:'Liberation Sans', sans-serif;">Válidos</div>
<div class="t" style="left:1190.06px;top:312.26px;font-size:15.40px;color:#505050;font-weight:normal;font-style:normal;font-family:'Liberation Sans', sans-serif;">100%</div>
<svg class="r" style="left:1040px;top:0px;top:336.95px;" width="9" height="9" viewBox="0 0 9 9"><circle cx="4.5" cy="4.5" r="3.8" fill="#f25757"/></svg>
<div class="t" style="left:1055.71px;top:333.04px;font-size:16.07px;color:#505050;font-weight:normal;font-style:normal;font-family:'Liberation Sans', sans-serif;">Erro</div>
<div class="t" style="left:1207.19px;top:333.61px;font-size:15.40px;color:#505050;font-weight:normal;font-style:normal;font-family:'Liberation Sans', sans-serif;">0%</div>
<svg class="r" style="left:1040px;top:0px;top:358.30px;" width="9" height="9" viewBox="0 0 9 9"><circle cx="4.5" cy="4.5" r="3.8" fill="#565b60"/></svg>
<div class="t" style="left:1057.00px;top:354.90px;font-size:15.47px;color:#505050;font-weight:normal;font-style:normal;font-family:'Liberation Sans', sans-serif;">Vazio</div>
<div class="t" style="left:1207.19px;top:354.96px;font-size:15.40px;color:#505050;font-weight:normal;font-style:normal;font-family:'Liberation Sans', sans-serif;">0%</div>
<div class="r" style="left:1241px;top:304px;width:1px;height:74px;background:#d6d6d6;"></div>
<svg class="r" style="left:1252px;top:0px;top:315.60px;" width="9" height="9" viewBox="0 0 9 9"><circle cx="4.5" cy="4.5" r="3.8" fill="#2e9d57"/></svg>
<div class="t" style="left:1269.00px;top:312.17px;font-size:15.51px;color:#505050;font-weight:normal;font-style:normal;font-family:'Liberation Sans', sans-serif;">Válidos</div>
<div class="t" style="left:1633.76px;top:312.26px;font-size:15.40px;color:#505050;font-weight:normal;font-style:normal;font-family:'Liberation Sans', sans-serif;">100%</div>
<svg class="r" style="left:1252px;top:0px;top:336.95px;" width="9" height="9" viewBox="0 0 9 9"><circle cx="4.5" cy="4.5" r="3.8" fill="#f25757"/></svg>
<div class="t" style="left:1267.71px;top:333.04px;font-size:16.07px;color:#505050;font-weight:normal;font-style:normal;font-family:'Liberation Sans', sans-serif;">Erro</div>
<div class="t" style="left:1650.89px;top:333.61px;font-size:15.40px;color:#505050;font-weight:normal;font-style:normal;font-family:'Liberation Sans', sans-serif;">0%</div>
<svg class="r" style="left:1252px;top:0px;top:358.30px;" width="9" height="9" viewBox="0 0 9 9"><circle cx="4.5" cy="4.5" r="3.8" fill="#565b60"/></svg>
<div class="t" style="left:1269.00px;top:354.90px;font-size:15.47px;color:#505050;font-weight:normal;font-style:normal;font-family:'Liberation Sans', sans-serif;">Vazio</div>
<div class="t" style="left:1650.89px;top:354.96px;font-size:15.40px;color:#505050;font-weight:normal;font-style:normal;font-family:'Liberation Sans', sans-serif;">0%</div>
<div class="r" style="left:263px;top:378px;width:1403px;height:680px;background:#ffffff;"></div>
<div class="r" style="left:263px;top:378px;width:293px;height:680px;background:#d4eee0;"></div>
<div class="r" style="left:263px;top:378.00px;width:1403px;height:1px;background:#dcdcdc;"></div>
<div class="r" style="left:225px;top:378.00px;width:38px;height:1px;background:#3a3a3a;"></div>
<div class="t" style="left:238.06px;top:384.09px;font-size:17.50px;color:#f2f2f2;font-weight:normal;font-style:normal;font-family:'Liberation Sans', sans-serif;transform:scaleX(0.9740);transform-origin:0 0;">1</div>
<div class="t" style="left:267.08px;top:384.04px;font-size:16.00px;color:#3c3c3c;font-weight:normal;font-style:normal;font-family:'Liberation Mono', monospace;">1</div>
<div class="t" style="left:559.96px;top:384.04px;font-size:16.00px;color:#3c3c3c;font-weight:normal;font-style:normal;font-family:'Liberation Mono', monospace;">Irmã Dulce</div>
<div class="t" style="left:986.64px;top:384.04px;font-size:16.00px;color:#3c3c3c;font-weight:normal;font-style:italic;font-family:'Liberation Mono', monospace;">null</div>
<div class="t" style="left:1032.56px;top:384.04px;font-size:16.00px;color:#3c3c3c;font-weight:normal;font-style:normal;font-family:'Liberation Mono', monospace;">Feminino</div>
<div class="t" style="left:1246.80px;top:384.04px;font-size:16.00px;color:#3c3c3c;font-weight:normal;font-style:normal;font-family:'Liberation Mono', monospace;"></div>
<div class="r" style="left:263px;top:405.96px;width:1403px;height:1px;background:#dcdcdc;"></div>
<div class="r" style="left:225px;top:405.96px;width:38px;height:1px;background:#3a3a3a;"></div>
<div class="t" style="left:238.43px;top:412.05px;font-size:17.50px;color:#f2f2f2;font-weight:normal;font-style:normal;font-family:'Liberation Sans', sans-serif;transform:scaleX(0.9317);transform-origin:0 0;">2</div>
<div class="t" style="left:267.08px;top:412.00px;font-size:16.00px;color:#3c3c3c;font-weight:normal;font-style:normal;font-family:'Liberation Mono', monospace;">2</div>
<div class="t" style="left:559.96px;top:412.00px;font-size:16.00px;color:#3c3c3c;font-weight:normal;font-style:normal;font-family:'Liberation Mono', monospace;">Frida Kahlo</div>
<div class="t" style="left:986.64px;top:412.00px;font-size:16.00px;color:#3c3c3c;font-weight:normal;font-style:italic;font-family:'Liberation Mono', monospace;">null</div>
<div class="t" style="left:1032.56px;top:412.00px;font-size:16.00px;color:#3c3c3c;font-weight:normal;font-style:normal;font-family:'Liberation Mono', monospace;">Feminino</div>
<div class="t" style="left:1246.80px;top:412.00px;font-size:16.00px;color:#3c3c3c;font-weight:normal;font-style:normal;font-family:'Liberation Mono', monospace;"></div>
<div class="r" style="left:263px;top:433.92px;width:1403px;height:1px;background:#dcdcdc;"></div>
<div class="r" style="left:225px;top:433.92px;width:38px;height:1px;background:#3a3a3a;"></div>
<div class="t" style="left:238.79px;top:440.01px;font-size:17.50px;color:#f2f2f2;font-weight:normal;font-style:normal;font-family:'Liberation Sans', sans-serif;transform:scaleX(0.8746);transform-origin:0 0;">3</div>
<div class="t" style="left:267.24px;top:439.96px;font-size:16.00px;color:#3c3c3c;font-weight:normal;font-style:normal;font-family:'Liberation Mono', monospace;">3</div>
<div class="t" style="left:560.44px;top:439.96px;font-size:16.00px;color:#3c3c3c;font-weight:normal;font-style:normal;font-family:'Liberation Mono', monospace;">Marie Curie</div>
<div class="t" style="left:986.64px;top:439.96px;font-size:16.00px;color:#3c3c3c;font-weight:normal;font-style:italic;font-family:'Liberation Mono', monospace;">null</div>
<div class="t" style="left:1032.56px;top:439.96px;font-size:16.00px;color:#3c3c3c;font-weight:normal;font-style:normal;font-family:'Liberation Mono', monospace;">Feminino</div>
<div class="t" style="left:1246.80px;top:439.96px;font-size:16.00px;color:#3c3c3c;font-weight:normal;font-style:normal;font-family:'Liberation Mono', monospace;"></div>
<div class="r" style="left:263px;top:461.88px;width:1403px;height:1px;background:#dcdcdc;"></div>
<div class="r" style="left:225px;top:461.88px;width:38px;height:1px;background:#3a3a3a;"></div>
<div class="t" style="left:238.96px;top:467.97px;font-size:17.50px;color:#f2f2f2;font-weight:normal;font-style:normal;font-family:'Liberation Sans', sans-serif;transform:scaleX(0.8403);transform-origin:0 0;">4</div>
<div class="t" style="left:267.40px;top:467.92px;font-size:16.00px;color:#3c3c3c;font-weight:normal;font-style:normal;font-family:'Liberation Mono', monospace;">4</div>
<div class="t" style="left:560.28px;top:467.92px;font-size:16.00px;color:#3c3c3c;font-weight:normal;font-style:normal;font-family:'Liberation Mono', monospace;">Eva Perón</div>
<div class="t" style="left:986.64px;top:467.92px;font-size:16.00px;color:#3c3c3c;font-weight:normal;font-style:italic;font-family:'Liberation Mono', monospace;">null</div>
<div class="t" style="left:1032.56px;top:467.92px;font-size:16.00px;color:#3c3c3c;font-weight:normal;font-style:normal;font-family:'Liberation Mono', monospace;">Feminino</div>
<div class="t" style="left:1246.80px;top:467.92px;font-size:16.00px;color:#3c3c3c;font-weight:normal;font-style:normal;font-family:'Liberation Mono', monospace;"></div>
<div class="r" style="left:263px;top:489.84px;width:1403px;height:1px;background:#dcdcdc;"></div>
<div class="r" style="left:225px;top:489.84px;width:38px;height:1px;background:#3a3a3a;"></div>
<div class="t" style="left:238.62px;top:495.93px;font-size:17.50px;color:#f2f2f2;font-weight:normal;font-style:normal;font-family:'Liberation Sans', sans-serif;transform:scaleX(0.8929);transform-origin:0 0;">5</div>
<div class="t" style="left:267.24px;top:495.88px;font-size:16.00px;color:#3c3c3c;font-weight:normal;font-style:normal;font-family:'Liberation Mono', monospace;">5</div>
<div class="t" style="left:559.96px;top:495.88px;font-size:16.00px;color:#3c3c3c;font-weight:normal;font-style:normal;font-family:'Liberation Mono', monospace;">Frida Baltazar</div>
<div class="t" style="left:986.64px;top:495.88px;font-size:16.00px;color:#3c3c3c;font-weight:normal;font-style:italic;font-family:'Liberation Mono', monospace;">null</div>
<div class="t" style="left:1032.56px;top:495.88px;font-size:16.00px;color:#3c3c3c;font-weight:normal;font-style:normal;font-family:'Liberation Mono', monospace;">Feminino</div>
<div class="t" style="left:1246.80px;top:495.88px;font-size:16.00px;color:#3c3c3c;font-weight:normal;font-style:normal;font-family:'Liberation Mono', monospace;"></div>
<div class="r" style="left:263px;top:517.80px;width:1403px;height:1px;background:#dcdcdc;"></div>
<div class="r" style="left:225px;top:517.80px;width:38px;height:1px;background:#3a3a3a;"></div>
<div class="t" style="left:238.45px;top:523.89px;font-size:17.50px;color:#f2f2f2;font-weight:normal;font-style:normal;font-family:'Liberation Sans', sans-serif;transform:scaleX(0.9119);transform-origin:0 0;">6</div>
<div class="t" style="left:267.08px;top:523.84px;font-size:16.00px;color:#3c3c3c;font-weight:normal;font-style:normal;font-family:'Liberation Mono', monospace;">6</div>
<div class="t" style="left:560.44px;top:523.84px;font-size:16.00px;color:#3c3c3c;font-weight:normal;font-style:normal;font-family:'Liberation Mono', monospace;">Malala Yousafzai</div>
<div class="t" style="left:986.64px;top:523.84px;font-size:16.00px;color:#3c3c3c;font-weight:normal;font-style:italic;font-family:'Liberation Mono', monospace;">null</div>
<div class="t" style="left:1032.56px;top:523.84px;font-size:16.00px;color:#3c3c3c;font-weight:normal;font-style:normal;font-family:'Liberation Mono', monospace;">Feminino</div>
<div class="t" style="left:1246.80px;top:523.84px;font-size:16.00px;color:#3c3c3c;font-weight:normal;font-style:normal;font-family:'Liberation Mono', monospace;"></div>
<div class="r" style="left:263px;top:545.76px;width:1403px;height:1px;background:#dcdcdc;"></div>
<div class="r" style="left:225px;top:545.76px;width:38px;height:1px;background:#3a3a3a;"></div>
<div class="t" style="left:238.43px;top:551.85px;font-size:17.50px;color:#f2f2f2;font-weight:normal;font-style:normal;font-family:'Liberation Sans', sans-serif;transform:scaleX(0.9317);transform-origin:0 0;">7</div>
<div class="t" style="left:267.08px;top:551.80px;font-size:16.00px;color:#3c3c3c;font-weight:normal;font-style:normal;font-family:'Liberation Mono', monospace;">7</div>
<div class="t" style="left:559.96px;top:551.80px;font-size:16.00px;color:#3c3c3c;font-weight:normal;font-style:normal;font-family:'Liberation Mono', monospace;">Francisca Pereira</div>
<div class="t" style="left:986.64px;top:551.80px;font-size:16.00px;color:#3c3c3c;font-weight:normal;font-style:italic;font-family:'Liberation Mono', monospace;">null</div>
<div class="t" style="left:1032.56px;top:551.80px;font-size:16.00px;color:#3c3c3c;font-weight:normal;font-style:normal;font-family:'Liberation Mono', monospace;">Feminino</div>
<div class="t" style="left:1246.80px;top:551.80px;font-size:16.00px;color:#3c3c3c;font-weight:normal;font-style:normal;font-family:'Liberation Mono', monospace;"></div>
<div class="r" style="left:263px;top:573.72px;width:1403px;height:1px;background:#dcdcdc;"></div>
<div class="r" style="left:225px;top:573.72px;width:38px;height:1px;background:#3a3a3a;"></div>
<div class="t" style="left:238.62px;top:579.81px;font-size:17.50px;color:#f2f2f2;font-weight:normal;font-style:normal;font-family:'Liberation Sans', sans-serif;transform:scaleX(0.8929);transform-origin:0 0;">8</div>
<div class="t" style="left:267.24px;top:579.76px;font-size:16.00px;color:#3c3c3c;font-weight:normal;font-style:normal;font-family:'Liberation Mono', monospace;">8</div>
<div class="t" style="left:560.92px;top:579.76px;font-size:16.00px;color:#3c3c3c;font-weight:normal;font-style:normal;font-family:'Liberation Mono', monospace;">Simone de Beauvoir</div>
<div class="t" style="left:986.64px;top:579.76px;font-size:16.00px;color:#3c3c3c;font-weight:normal;font-style:italic;font-family:'Liberation Mono', monospace;">null</div>
<div class="t" style="left:1032.56px;top:579.76px;font-size:16.00px;color:#3c3c3c;font-weight:normal;font-style:normal;font-family:'Liberation Mono', monospace;">Feminino</div>
<div class="t" style="left:1246.80px;top:579.76px;font-size:16.00px;color:#3c3c3c;font-weight:normal;font-style:normal;font-family:'Liberation Mono', monospace;"></div>
<div class="r" style="left:263px;top:601.68px;width:1403px;height:1px;background:#dcdcdc;"></div>
<div class="r" style="left:225px;top:601.68px;width:38px;height:1px;background:#3a3a3a;"></div>
<div class="t" style="left:238.61px;top:607.77px;font-size:17.50px;color:#f2f2f2;font-weight:normal;font-style:normal;font-family:'Liberation Sans', sans-serif;transform:scaleX(0.9119);transform-origin:0 0;">9</div>
<div class="t" style="left:267.24px;top:607.72px;font-size:16.00px;color:#3c3c3c;font-weight:normal;font-style:normal;font-family:'Liberation Mono', monospace;">9</div>
<div class="t" style="left:561.40px;top:607.72px;font-size:16.00px;color:#3c3c3c;font-weight:normal;font-style:normal;font-family:'Liberation Mono', monospace;">Anne Frank</div>
<div class="t" style="left:986.64px;top:607.72px;font-size:16.00px;color:#3c3c3c;font-weight:normal;font-style:italic;font-family:'Liberation Mono', monospace;">null</div>
<div class="t" style="left:1032.56px;top:607.72px;font-size:16.00px;color:#3c3c3c;font-weight:normal;font-style:normal;font-family:'Liberation Mono', monospace;">Feminino</div>
<div class="t" style="left:1246.80px;top:607.72px;font-size:16.00px;color:#3c3c3c;font-weight:normal;font-style:normal;font-family:'Liberation Mono', monospace;"></div>
<div class="r" style="left:263px;top:629.64px;width:1403px;height:1px;background:#dcdcdc;"></div>
<div class="r" style="left:225px;top:629.64px;width:38px;height:1px;background:#3a3a3a;"></div>
<div class="t" style="left:234.51px;top:635.73px;font-size:17.50px;color:#f2f2f2;font-weight:normal;font-style:normal;font-family:'Liberation Sans', sans-serif;transform:scaleX(0.8462);transform-origin:0 0;">10</div>
<div class="t" style="left:267.08px;top:635.68px;font-size:16.00px;color:#3c3c3c;font-weight:normal;font-style:normal;font-family:'Liberation Mono', monospace;">10</div>
<div class="t" style="left:560.60px;top:635.68px;font-size:16.00px;color:#3c3c3c;font-weight:normal;font-style:normal;font-family:'Liberation Mono', monospace;">Gandhi</div>
<div class="t" style="left:986.64px;top:635.68px;font-size:16.00px;color:#3c3c3c;font-weight:normal;font-style:italic;font-family:'Liberation Mono', monospace;">null</div>
<div class="t" style="left:1032.56px;top:635.68px;font-size:16.00px;color:#3c3c3c;font-weight:normal;font-style:normal;font-family:'Liberation Mono', monospace;">Feminino</div>
<div class="t" style="left:1246.80px;top:635.68px;font-size:16.00px;color:#3c3c3c;font-weight:normal;font-style:normal;font-family:'Liberation Mono', monospace;"></div>
<div class="r" style="left:263px;top:657.60px;width:1403px;height:1px;background:#dcdcdc;"></div>
<div class="r" style="left:225px;top:657.60px;width:38px;height:1px;background:#3a3a3a;"></div>
<div class="t" style="left:234.42px;top:663.69px;font-size:17.50px;color:#f2f2f2;font-weight:normal;font-style:normal;font-family:'Liberation Sans', sans-serif;transform:scaleX(0.9235);transform-origin:0 0;">11</div>
<div class="t" style="left:267.08px;top:663.64px;font-size:16.00px;color:#3c3c3c;font-weight:normal;font-style:normal;font-family:'Liberation Mono', monospace;">11</div>
<div class="t" style="left:560.28px;top:663.64px;font-size:16.00px;color:#3c3c3c;font-weight:normal;font-style:normal;font-family:'Liberation Mono', monospace;">Elizabeth Blackwell</div>
<div class="t" style="left:986.64px;top:663.64px;font-size:16.00px;color:#3c3c3c;font-weight:normal;font-style:italic;font-family:'Liberation Mono', monospace;">null</div>
<div class="t" style="left:1032.56px;top:663.64px;font-size:16.00px;color:#3c3c3c;font-weight:normal;font-style:normal;font-family:'Liberation Mono', monospace;">Feminino</div>
<div class="t" style="left:1246.80px;top:663.64px;font-size:16.00px;color:#3c3c3c;font-weight:normal;font-style:normal;font-family:'Liberation Mono', monospace;"></div>
<div class="r" style="left:263px;top:685.56px;width:1403px;height:1px;background:#dcdcdc;"></div>
<div class="r" style="left:225px;top:685.56px;width:38px;height:1px;background:#3a3a3a;"></div>
<div class="t" style="left:234.50px;top:691.65px;font-size:17.50px;color:#f2f2f2;font-weight:normal;font-style:normal;font-family:'Liberation Sans', sans-serif;transform:scaleX(0.8547);transform-origin:0 0;">12</div>
<div class="t" style="left:267.08px;top:691.60px;font-size:16.00px;color:#3c3c3c;font-weight:normal;font-style:normal;font-family:'Liberation Mono', monospace;">12</div>
<div class="t" style="left:560.44px;top:691.60px;font-size:16.00px;color:#3c3c3c;font-weight:normal;font-style:normal;font-family:'Liberation Mono', monospace;">Maria Montessori</div>
<div class="t" style="left:986.64px;top:691.60px;font-size:16.00px;color:#3c3c3c;font-weight:normal;font-style:italic;font-family:'Liberation Mono', monospace;">null</div>
<div class="t" style="left:1032.56px;top:691.60px;font-size:16.00px;color:#3c3c3c;font-weight:normal;font-style:normal;font-family:'Liberation Mono', monospace;">Feminino</div>
<div class="t" style="left:1246.80px;top:691.60px;font-size:16.00px;color:#3c3c3c;font-weight:normal;font-style:normal;font-family:'Liberation Mono', monospace;"></div>
<div class="r" style="left:263px;top:713.52px;width:1403px;height:1px;background:#dcdcdc;"></div>
<div class="r" style="left:225px;top:713.52px;width:38px;height:1px;background:#3a3a3a;"></div>
<div class="t" style="left:234.51px;top:719.61px;font-size:17.50px;color:#f2f2f2;font-weight:normal;font-style:normal;font-family:'Liberation Sans', sans-serif;transform:scaleX(0.8462);transform-origin:0 0;">13</div>
<div class="t" style="left:267.08px;top:719.56px;font-size:16.00px;color:#3c3c3c;font-weight:normal;font-style:normal;font-family:'Liberation Mono', monospace;">13</div>
<div class="t" style="left:560.92px;top:719.56px;font-size:16.00px;color:#3c3c3c;font-weight:normal;font-style:normal;font-family:'Liberation Mono', monospace;">Tarsila do Amaral</div>
<div class="t" style="left:986.64px;top:719.56px;font-size:16.00px;color:#3c3c3c;font-weight:normal;font-style:italic;font-family:'Liberation Mono', monospace;">null</div>
<div class="t" style="left:1032.56px;top:719.56px;font-size:16.00px;color:#3c3c3c;font-weight:normal;font-style:normal;font-family:'Liberation Mono', monospace;">Feminino</div>
<div class="t" style="left:1246.80px;top:719.56px;font-size:16.00px;color:#3c3c3c;font-weight:normal;font-style:normal;font-family:'Liberation Mono', monospace;"></div>
<div class="r" style="left:263px;top:741.48px;width:1403px;height:1px;background:#dcdcdc;"></div>
<div class="r" style="left:225px;top:741.48px;width:38px;height:1px;background:#3a3a3a;"></div>
<div class="t" style="left:234.52px;top:747.57px;font-size:17.50px;color:#f2f2f2;font-weight:normal;font-style:normal;font-family:'Liberation Sans', sans-serif;transform:scaleX(0.8379);transform-origin:0 0;">14</div>
<div class="t" style="left:267.08px;top:747.52px;font-size:16.00px;color:#3c3c3c;font-weight:normal;font-style:normal;font-family:'Liberation Mono', monospace;">14</div>
<div class="t" style="left:560.28px;top:747.52px;font-size:16.00px;color:#3c3c3c;font-weight:normal;font-style:normal;font-family:'Liberation Mono', monospace;">Emmeline Pankhurst</div>
<div class="t" style="left:986.64px;top:747.52px;font-size:16.00px;color:#3c3c3c;font-weight:normal;font-style:italic;font-family:'Liberation Mono', monospace;">null</div>
<div class="t" style="left:1032.56px;top:747.52px;font-size:16.00px;color:#3c3c3c;font-weight:normal;font-style:normal;font-family:'Liberation Mono', monospace;">Feminino</div>
<div class="t" style="left:1246.80px;top:747.52px;font-size:16.00px;color:#3c3c3c;font-weight:normal;font-style:normal;font-family:'Liberation Mono', monospace;"></div>
<div class="r" style="left:263px;top:769.44px;width:1403px;height:1px;background:#dcdcdc;"></div>
<div class="r" style="left:225px;top:769.44px;width:38px;height:1px;background:#3a3a3a;"></div>
<div class="t" style="left:234.51px;top:775.53px;font-size:17.50px;color:#f2f2f2;font-weight:normal;font-style:normal;font-family:'Liberation Sans', sans-serif;transform:scaleX(0.8462);transform-origin:0 0;">15</div>
<div class="t" style="left:267.08px;top:775.48px;font-size:16.00px;color:#3c3c3c;font-weight:normal;font-style:normal;font-family:'Liberation Mono', monospace;">15</div>
<div class="t" style="left:560.28px;top:775.48px;font-size:16.00px;color:#3c3c3c;font-weight:normal;font-style:normal;font-family:'Liberation Mono', monospace;">Helen Keller</div>
<div class="t" style="left:986.64px;top:775.48px;font-size:16.00px;color:#3c3c3c;font-weight:normal;font-style:italic;font-family:'Liberation Mono', monospace;">null</div>
<div class="t" style="left:1032.56px;top:775.48px;font-size:16.00px;color:#3c3c3c;font-weight:normal;font-style:normal;font-family:'Liberation Mono', monospace;">Feminino</div>
<div class="t" style="left:1245.68px;top:775.48px;font-size:16.00px;color:#3c3c3c;font-weight:normal;font-style:normal;font-family:'Liberation Mono', monospace;">28/10/1992</div>
<div class="r" style="left:263px;top:797.40px;width:1403px;height:1px;background:#dcdcdc;"></div>
<div class="r" style="left:225px;top:797.40px;width:38px;height:1px;background:#3a3a3a;"></div>
<div class="t" style="left:234.51px;top:803.49px;font-size:17.50px;color:#f2f2f2;font-weight:normal;font-style:normal;font-family:'Liberation Sans', sans-serif;transform:scaleX(0.8462);transform-origin:0 0;">16</div>
<div class="t" style="left:267.08px;top:803.44px;font-size:16.00px;color:#3c3c3c;font-weight:normal;font-style:normal;font-family:'Liberation Mono', monospace;">16</div>
<div class="t" style="left:560.44px;top:803.44px;font-size:16.00px;color:#3c3c3c;font-weight:normal;font-style:normal;font-family:'Liberation Mono', monospace;">Madame Curie</div>
<div class="t" style="left:986.64px;top:803.44px;font-size:16.00px;color:#3c3c3c;font-weight:normal;font-style:italic;font-family:'Liberation Mono', monospace;">null</div>
<div class="t" style="left:1032.56px;top:803.44px;font-size:16.00px;color:#3c3c3c;font-weight:normal;font-style:normal;font-family:'Liberation Mono', monospace;">Feminino</div>
<div class="t" style="left:1245.68px;top:803.44px;font-size:16.00px;color:#3c3c3c;font-weight:normal;font-style:normal;font-family:'Liberation Mono', monospace;">19/06/1990</div>
<div class="r" style="left:263px;top:825.36px;width:1403px;height:1px;background:#dcdcdc;"></div>
<div class="r" style="left:225px;top:825.36px;width:38px;height:1px;background:#3a3a3a;"></div>
<div class="t" style="left:234.50px;top:831.45px;font-size:17.50px;color:#f2f2f2;font-weight:normal;font-style:normal;font-family:'Liberation Sans', sans-serif;transform:scaleX(0.8547);transform-origin:0 0;">17</div>
<div class="t" style="left:267.08px;top:831.40px;font-size:16.00px;color:#3c3c3c;font-weight:normal;font-style:normal;font-family:'Liberation Mono', monospace;">17</div>
<div class="t" style="left:560.60px;top:831.40px;font-size:16.00px;color:#3c3c3c;font-weight:normal;font-style:normal;font-family:'Liberation Mono', monospace;">Chiquinha Gonzaga</div>
<div class="t" style="left:986.64px;top:831.40px;font-size:16.00px;color:#3c3c3c;font-weight:normal;font-style:italic;font-family:'Liberation Mono', monospace;">null</div>
<div class="t" style="left:1032.56px;top:831.40px;font-size:16.00px;color:#3c3c3c;font-weight:normal;font-style:normal;font-family:'Liberation Mono', monospace;">Feminino</div>
<div class="t" style="left:1245.68px;top:831.40px;font-size:16.00px;color:#3c3c3c;font-weight:normal;font-style:normal;font-family:'Liberation Mono', monospace;">18/03/1990</div>
<div class="r" style="left:263px;top:853.32px;width:1403px;height:1px;background:#dcdcdc;"></div>
<div class="r" style="left:225px;top:853.32px;width:38px;height:1px;background:#3a3a3a;"></div>
<div class="t" style="left:234.51px;top:859.41px;font-size:17.50px;color:#f2f2f2;font-weight:normal;font-style:normal;font-family:'Liberation Sans', sans-serif;transform:scaleX(0.8462);transform-origin:0 0;">18</div>
<div class="t" style="left:267.08px;top:859.36px;font-size:16.00px;color:#3c3c3c;font-weight:normal;font-style:normal;font-family:'Liberation Mono', monospace;">18</div>
<div class="t" style="left:560.60px;top:859.36px;font-size:16.00px;color:#3c3c3c;font-weight:normal;font-style:normal;font-family:'Liberation Mono', monospace;">Clara Barton</div>
<div class="t" style="left:986.64px;top:859.36px;font-size:16.00px;color:#3c3c3c;font-weight:normal;font-style:italic;font-family:'Liberation Mono', monospace;">null</div>
<div class="t" style="left:1032.56px;top:859.36px;font-size:16.00px;color:#3c3c3c;font-weight:normal;font-style:normal;font-family:'Liberation Mono', monospace;">Feminino</div>
<div class="t" style="left:1245.84px;top:859.36px;font-size:16.00px;color:#3c3c3c;font-weight:normal;font-style:normal;font-family:'Liberation Mono', monospace;">01/09/1992</div>
<div class="r" style="left:263px;top:881.28px;width:1403px;height:1px;background:#dcdcdc;"></div>
<div class="r" style="left:225px;top:881.28px;width:38px;height:1px;background:#3a3a3a;"></div>
<div class="t" style="left:234.50px;top:887.37px;font-size:17.50px;color:#f2f2f2;font-weight:normal;font-style:normal;font-family:'Liberation Sans', sans-serif;transform:scaleX(0.8547);transform-origin:0 0;">19</div>
<div class="t" style="left:267.08px;top:887.32px;font-size:16.00px;color:#3c3c3c;font-weight:normal;font-style:normal;font-family:'Liberation Mono', monospace;">19</div>
<div class="t" style="left:561.40px;top:887.32px;font-size:16.00px;color:#3c3c3c;font-weight:normal;font-style:normal;font-family:'Liberation Mono', monospace;">Anita Garibaldi</div>
<div class="t" style="left:986.64px;top:887.32px;font-size:16.00px;color:#3c3c3c;font-weight:normal;font-style:italic;font-family:'Liberation Mono', monospace;">null</div>
<div class="t" style="left:1032.56px;top:887.32px;font-size:16.00px;color:#3c3c3c;font-weight:normal;font-style:normal;font-family:'Liberation Mono', monospace;">Feminino</div>
<div class="t" style="left:1245.68px;top:887.32px;font-size:16.00px;color:#3c3c3c;font-weight:normal;font-style:normal;font-family:'Liberation Mono', monospace;">29/06/1986</div>
<div class="r" style="left:263px;top:909.24px;width:1403px;height:1px;background:#dcdcdc;"></div>
<div class="r" style="left:225px;top:909.24px;width:38px;height:1px;background:#3a3a3a;"></div>
<div class="t" style="left:234.82px;top:915.33px;font-size:17.50px;color:#f2f2f2;font-weight:normal;font-style:normal;font-family:'Liberation Sans', sans-serif;transform:scaleX(0.8297);transform-origin:0 0;">20</div>
<div class="t" style="left:267.08px;top:915.28px;font-size:16.00px;color:#3c3c3c;font-weight:normal;font-style:normal;font-family:'Liberation Mono', monospace;">20</div>
<div class="t" style="left:560.92px;top:915.28px;font-size:16.00px;color:#3c3c3c;font-weight:normal;font-style:normal;font-family:'Liberation Mono', monospace;">Susan B. Anthony</div>
<div class="t" style="left:986.64px;top:915.28px;font-size:16.00px;color:#3c3c3c;font-weight:normal;font-style:italic;font-family:'Liberation Mono', monospace;">null</div>
<div class="t" style="left:1032.56px;top:915.28px;font-size:16.00px;color:#3c3c3c;font-weight:normal;font-style:normal;font-family:'Liberation Mono', monospace;">Feminino</div>
<div class="t" style="left:1245.84px;top:915.28px;font-size:16.00px;color:#3c3c3c;font-weight:normal;font-style:normal;font-family:'Liberation Mono', monospace;">04/06/1994</div>
<div class="r" style="left:263px;top:937.20px;width:1403px;height:1px;background:#dcdcdc;"></div>
<div class="r" style="left:225px;top:937.20px;width:38px;height:1px;background:#3a3a3a;"></div>
<div class="t" style="left:234.82px;top:943.29px;font-size:17.50px;color:#f2f2f2;font-weight:normal;font-style:normal;font-family:'Liberation Sans', sans-serif;transform:scaleX(0.8379);transform-origin:0 0;">21</div>
<div class="t" style="left:267.08px;top:943.24px;font-size:16.00px;color:#3c3c3c;font-weight:normal;font-style:normal;font-family:'Liberation Mono', monospace;">21</div>
<div class="t" style="left:559.96px;top:943.24px;font-size:16.00px;color:#3c3c3c;font-weight:normal;font-style:normal;font-family:'Liberation Mono', monospace;">Florence Nightingale</div>
<div class="t" style="left:986.64px;top:943.24px;font-size:16.00px;color:#3c3c3c;font-weight:normal;font-style:italic;font-family:'Liberation Mono', monospace;">null</div>
<div class="t" style="left:1032.56px;top:943.24px;font-size:16.00px;color:#3c3c3c;font-weight:normal;font-style:normal;font-family:'Liberation Mono', monospace;">Feminino</div>
<div class="t" style="left:1245.84px;top:943.24px;font-size:16.00px;color:#3c3c3c;font-weight:normal;font-style:normal;font-family:'Liberation Mono', monospace;">05/06/1990</div>
<div class="r" style="left:263px;top:965.16px;width:1403px;height:1px;background:#dcdcdc;"></div>
<div class="r" style="left:225px;top:965.16px;width:38px;height:1px;background:#3a3a3a;"></div>
<div class="t" style="left:234.82px;top:971.25px;font-size:17.50px;color:#f2f2f2;font-weight:normal;font-style:normal;font-family:'Liberation Sans', sans-serif;transform:scaleX(0.8379);transform-origin:0 0;">22</div>
<div class="t" style="left:267.08px;top:971.20px;font-size:16.00px;color:#3c3c3c;font-weight:normal;font-style:normal;font-family:'Liberation Mono', monospace;">22</div>
<div class="t" style="left:561.40px;top:971.20px;font-size:16.00px;color:#3c3c3c;font-weight:normal;font-style:normal;font-family:'Liberation Mono', monospace;">Ana Néri</div>
<div class="t" style="left:986.64px;top:971.20px;font-size:16.00px;color:#3c3c3c;font-weight:normal;font-style:italic;font-family:'Liberation Mono', monospace;">null</div>
<div class="t" style="left:1032.56px;top:971.20px;font-size:16.00px;color:#3c3c3c;font-weight:normal;font-style:normal;font-family:'Liberation Mono', monospace;">Feminino</div>
<div class="t" style="left:1245.68px;top:971.20px;font-size:16.00px;color:#3c3c3c;font-weight:normal;font-style:normal;font-family:'Liberation Mono', monospace;">16/11/1983</div>
<div class="r" style="left:263px;top:993.12px;width:1403px;height:1px;background:#dcdcdc;"></div>
<div class="r" style="left:225px;top:993.12px;width:38px;height:1px;background:#3a3a3a;"></div>
<div class="t" style="left:234.82px;top:999.21px;font-size:17.50px;color:#f2f2f2;font-weight:normal;font-style:normal;font-family:'Liberation Sans', sans-serif;transform:scaleX(0.8297);transform-origin:0 0;">23</div>
<div class="t" style="left:267.08px;top:999.16px;font-size:16.00px;color:#3c3c3c;font-weight:normal;font-style:normal;font-family:'Liberation Mono', monospace;">23</div>
<div class="t" style="left:560.44px;top:999.16px;font-size:16.00px;color:#3c3c3c;font-weight:normal;font-style:normal;font-family:'Liberation Mono', monospace;">Maria Quitéria</div>
<div class="t" style="left:986.64px;top:999.16px;font-size:16.00px;color:#3c3c3c;font-weight:normal;font-style:italic;font-family:'Liberation Mono', monospace;">null</div>
<div class="t" style="left:1032.56px;top:999.16px;font-size:16.00px;color:#3c3c3c;font-weight:normal;font-style:normal;font-family:'Liberation Mono', monospace;">Feminino</div>
<div class="t" style="left:1245.68px;top:999.16px;font-size:16.00px;color:#3c3c3c;font-weight:normal;font-style:normal;font-family:'Liberation Mono', monospace;">29/01/1979</div>
<div class="r" style="left:263px;top:1021.08px;width:1403px;height:1px;background:#dcdcdc;"></div>
<div class="r" style="left:225px;top:1021.08px;width:38px;height:1px;background:#3a3a3a;"></div>
<div class="t" style="left:234.83px;top:1027.17px;font-size:17.50px;color:#f2f2f2;font-weight:normal;font-style:normal;font-family:'Liberation Sans', sans-serif;transform:scaleX(0.8217);transform-origin:0 0;">24</div>
<div class="t" style="left:267.08px;top:1027.12px;font-size:16.00px;color:#3c3c3c;font-weight:normal;font-style:normal;font-family:'Liberation Mono', monospace;">24</div>
<div class="t" style="left:560.44px;top:1027.12px;font-size:16.00px;color:#3c3c3c;font-weight:normal;font-style:normal;font-family:'Liberation Mono', monospace;">Mary Wollstonecraft</div>
<div class="t" style="left:986.64px;top:1027.12px;font-size:16.00px;color:#3c3c3c;font-weight:normal;font-style:italic;font-family:'Liberation Mono', monospace;">null</div>
<div class="t" style="left:1032.56px;top:1027.12px;font-size:16.00px;color:#3c3c3c;font-weight:normal;font-style:normal;font-family:'Liberation Mono', monospace;">Feminino</div>
<div class="t" style="left:1245.68px;top:1027.12px;font-size:16.00px;color:#3c3c3c;font-weight:normal;font-style:normal;font-family:'Liberation Mono', monospace;">24/06/1977</div>
<div class="r" style="left:263px;top:1049.04px;width:1403px;height:1px;background:#dcdcdc;"></div>
<div class="r" style="left:225px;top:1049.04px;width:38px;height:1px;background:#3a3a3a;"></div>
<div class="t" style="left:234.82px;top:1055.13px;font-size:17.50px;color:#f2f2f2;font-weight:normal;font-style:normal;font-family:'Liberation Sans', sans-serif;transform:scaleX(0.8297);transform-origin:0 0;">25</div>
<div class="r" style="left:556px;top:378px;width:1px;height:680px;background:#d4d4d4;"></div>
<div class="r" style="left:815px;top:378px;width:1px;height:680px;background:#d4d4d4;"></div>
<div class="r" style="left:1029px;top:378px;width:1px;height:680px;background:#d4d4d4;"></div>
<div class="r" style="left:1241px;top:378px;width:1px;height:680px;background:#d4d4d4;"></div>
<div class="r" style="left:262px;top:298px;width:1px;height:760px;background:#3a3a3a;"></div>
<div class="r" style="left:1666px;top:377.5px;width:21px;height:681px;background:#f0f0f0;"></div>
<div class="r" style="left:1667px;top:424px;width:19px;height:265px;background:#cdcdcd;"></div>
<svg class="r" style="left:1668px;top:400px;" width="17" height="13" viewBox="0 0 17 13"><path d="M1.5 11 L8.5 3 L15.5 11" fill="none" stroke="#464b50" stroke-width="2.6"/></svg>
<svg class="r" style="left:1668px;top:1001px;" width="17" height="13" viewBox="0 0 17 13"><path d="M1.5 2 L8.5 10 L15.5 2" fill="none" stroke="#464b50" stroke-width="2.6"/></svg>
<div class="r" style="left:263px;top:1036px;width:1403px;height:22px;background:#f0f0f0;"></div>
<div class="r" style="left:309px;top:1038px;width:702px;height:19px;background:#cdcdcd;"></div>
<svg class="r" style="left:285px;top:1040px;" width="13" height="17" viewBox="0 0 13 17"><path d="M11 1.5 L3 8.5 L11 15.5" fill="none" stroke="#464b50" stroke-width="2.6"/></svg>
<svg class="r" style="left:1630px;top:1040px;" width="13" height="17" viewBox="0 0 13 17"><path d="M2 1.5 L10 8.5 L2 15.5" fill="none" stroke="#464b50" stroke-width="2.6"/></svg>
<div class="r" style="left:1666px;top:1036px;width:21px;height:22px;background:#f0f0f0;"></div>
<div class="r" style="left:1693px;top:213px;width:1px;height:845px;background:#393939;"></div>
<div class="t" style="left:1712.96px;top:238.39px;font-size:27.30px;color:#e6e6e6;font-weight:normal;font-style:normal;font-family:'Liberation Sans', sans-serif;-webkit-text-stroke:0.55px #252525;transform:scaleX(0.9074);transform-origin:0 0;">Config. Consulta</div>
<svg class="r" style="left:1996px;top:244px;" width="18" height="18" viewBox="0 0 18 18"><path d="M2 2 L16 16 M16 2 L2 16" stroke="#e0e0e0" stroke-width="1.8"/></svg>
<svg class="r" style="left:1707px;top:298px;" width="10" height="10" viewBox="0 0 10 10"><path d="M9 1 V9 H1 Z" fill="#e0e0e0"/></svg>
<div class="t" style="left:1724.81px;top:296.58px;font-size:14.90px;color:#f2f2f2;font-weight:bold;font-style:normal;font-family:'Liberation Sans', sans-serif;">PROPRIEDADES</div>
<div class="t" style="left:1724.76px;top:322.28px;font-size:15.50px;color:#e6e6e6;font-weight:normal;font-style:normal;font-family:'Liberation Sans', sans-serif;">Nome</div>
<div class="r" style="left:1725px;top:342px;width:290px;height:31px;background:#323232;border:1px solid #3d3d3d;box-sizing:border-box;"></div>
<div class="t" style="left:1731.82px;top:351.17px;font-size:14.69px;color:#c8c8c8;font-weight:normal;font-style:normal;font-family:'Liberation Sans', sans-serif;">PDF_MultiPaginas pdf</div>
<div class="t" style="left:1724.69px;top:384.48px;font-size:15.62px;color:#e6e6e6;font-weight:normal;font-style:normal;font-family:'Liberation Sans', sans-serif;">Todas as Propriedades</div>
<svg class="r" style="left:1707px;top:432px;" width="10" height="10" viewBox="0 0 10 10"><path d="M9 1 V9 H1 Z" fill="#e0e0e0"/></svg>
<div class="t" style="left:1724.09px;top:430.42px;font-size:15.22px;color:#f2f2f2;font-weight:bold;font-style:normal;font-family:'Liberation Sans', sans-serif;">ETAPAS APLICADAS</div>
<div class="r" style="left:1725px;top:456px;width:290px;height:577px;background:#333333;border:1px solid #3a3a3a;border-bottom:2px solid #3c3c3c;box-sizing:border-box;"></div>
<div class="t" style="left:1752.76px;top:462.68px;font-size:15.50px;color:#e6e6e6;font-weight:normal;font-style:normal;font-family:'Liberation Sans', sans-serif;">Fonte</div>
<svg class="r" style="left:1989px;top:462px;" width="16" height="16" viewBox="0 0 16 16"><path d="M8 0.8 L9.4 3 L12 2.4 L12.3 5 L14.9 5.9 L13.5 8 L14.9 10.1 L12.3 11 L12 13.6 L9.4 13 L8 15.2 L6.6 13 L4 13.6 L3.7 11 L1.1 10.1 L2.5 8 L1.1 5.9 L3.7 5 L4 2.4 L6.6 3 Z" fill="#d4d4d4"/><circle cx="8" cy="8" r="2.8" fill="#333333"/></svg>
<div class="t" style="left:1752.76px;top:489.48px;font-size:15.50px;color:#e6e6e6;font-weight:normal;font-style:normal;font-family:'Liberation Sans', sans-serif;">Linhas Filtradas</div>
<svg class="r" style="left:1989px;top:489px;" width="16" height="16" viewBox="0 0 16 16"><path d="M8 0.8 L9.4 3 L12 2.4 L12.3 5 L14.9 5.9 L13.5 8 L14.9 10.1 L12.3 11 L12 13.6 L9.4 13 L8 15.2 L6.6 13 L4 13.6 L3.7 11 L1.1 10.1 L2.5 8 L1.1 5.9 L3.7 5 L4 2.4 L6.6 3 Z" fill="#d4d4d4"/><circle cx="8" cy="8" r="2.8" fill="#333333"/></svg>
<div class="t" style="left:1753.38px;top:516.28px;font-size:15.50px;color:#e6e6e6;font-weight:normal;font-style:normal;font-family:'Liberation Sans', sans-serif;">Outras Colunas Removidas</div>
<svg class="r" style="left:1989px;top:515px;" width="16" height="16" viewBox="0 0 16 16"><path d="M8 0.8 L9.4 3 L12 2.4 L12.3 5 L14.9 5.9 L13.5 8 L14.9 10.1 L12.3 11 L12 13.6 L9.4 13 L8 15.2 L6.6 13 L4 13.6 L3.7 11 L1.1 10.1 L2.5 8 L1.1 5.9 L3.7 5 L4 2.4 L6.6 3 Z" fill="#d4d4d4"/><circle cx="8" cy="8" r="2.8" fill="#333333"/></svg>
<div class="t" style="left:1752.76px;top:543.08px;font-size:15.50px;color:#e6e6e6;font-weight:normal;font-style:normal;font-family:'Liberation Sans', sans-serif;">Data Expandido</div>
<svg class="r" style="left:1989px;top:542px;" width="16" height="16" viewBox="0 0 16 16"><path d="M8 0.8 L9.4 3 L12 2.4 L12.3 5 L14.9 5.9 L13.5 8 L14.9 10.1 L12.3 11 L12 13.6 L9.4 13 L8 15.2 L6.6 13 L4 13.6 L3.7 11 L1.1 10.1 L2.5 8 L1.1 5.9 L3.7 5 L4 2.4 L6.6 3 Z" fill="#d4d4d4"/><circle cx="8" cy="8" r="2.8" fill="#333333"/></svg>
<div class="r" style="left:1727px;top:564px;width:287px;height:26px;background:#4a9568;"></div>
<svg class="r" style="left:1733px;top:571px;" width="14" height="13" viewBox="0 0 14 13"><path d="M1.5 1 L12.5 12 M12.5 1 L1.5 12" stroke="#ffffff" stroke-width="1.7"/></svg>
<div class="t" style="left:1753.22px;top:569.88px;font-size:15.50px;color:#ffffff;font-weight:normal;font-style:normal;font-family:'Liberation Sans', sans-serif;">Cabeçalhos Promovidos</div>
<svg class="r" style="left:1989px;top:569px;" width="16" height="16" viewBox="0 0 16 16"><path d="M8 0.8 L9.4 3 L12 2.4 L12.3 5 L14.9 5.9 L13.5 8 L14.9 10.1 L12.3 11 L12 13.6 L9.4 13 L8 15.2 L6.6 13 L4 13.6 L3.7 11 L1.1 10.1 L2.5 8 L1.1 5.9 L3.7 5 L4 2.4 L6.6 3 Z" fill="#d4d4d4"/><circle cx="8" cy="8" r="2.8" fill="#4a9568"/></svg>
<div class="r" style="left:0px;top:1058px;width:2048px;height:33px;background:#2f2e2c;border-top:1px solid #393939;box-sizing:border-box;"></div>
<div class="r" style="left:0px;top:1088px;width:2048px;height:1px;background:#3a3a3a;"></div>
<div class="r" style="left:0px;top:1089px;width:2048px;height:2px;background:#2a2a2a;"></div>
<div class="t" style="left:6.03px;top:1068.10px;font-size:13.82px;color:#e2e2e2;font-weight:normal;font-style:normal;font-family:'Liberation Sans', sans-serif;">10 COLUNAS, 352 LINHAS</div>
<div class="t" style="left:195.28px;top:1067.63px;font-size:14.38px;color:#e2e2e2;font-weight:normal;font-style:normal;font-family:'Liberation Sans', sans-serif;">Criação de perfil de coluna com base nas primeiras 1000 linhas</div>
<div class="t" style="left:1765.60px;top:1068.51px;font-size:13.34px;color:#e2e2e2;font-weight:normal;font-style:normal;font-family:'Liberation Sans', sans-serif;">VISUALIZAÇÃO BAIXADA EM TERÇA-FEIRA</div>
<div class="r" style="left:567px;top:378px;width:932px;height:395px;background:#ffffff;border:1px solid #c6c6c6;border-radius:9px;box-sizing:border-box;box-shadow:0 14px 60px rgba(0,0,0,0.17), 0 2px 8px rgba(0,0,0,0.08);"></div>
<svg class="r" style="left:1471px;top:387px;" width="15" height="15" viewBox="0 0 15 15"><path d="M1 1 L14 14 M14 1 L1 14" stroke="#555" stroke-width="1.3"/></svg>
<div class="t" style="left:606.71px;top:417.44px;font-size:27.60px;color:#4a6070;font-weight:normal;font-style:normal;font-family:'Liberation Sans', sans-serif;-webkit-text-stroke:0.55px #ffffff;transform:scaleX(0.8996);transform-origin:0 0;">Substituir Valores</div>
<div class="t" style="left:606.31px;top:462.49px;font-size:17.14px;color:#383838;font-weight:normal;font-style:normal;font-family:'Liberation Sans', sans-serif;">Substitua um valor por outro nas colunas selecionadas.</div>
<div class="t" style="left:607.00px;top:502.90px;font-size:15.48px;color:#383838;font-weight:normal;font-style:normal;font-family:'Liberation Sans', sans-serif;">Valor a Ser Localizado</div>
<div class="r" style="left:607px;top:523px;width:308px;height:30px;background:#ffffff;border:2px solid #4a4a4a;box-sizing:border-box;"></div>
<div class="t" style="left:614.86px;top:531.15px;font-size:14.00px;color:#222;font-weight:bold;font-style:normal;font-family:'Liberation Sans', sans-serif;">##</div>
<div class="t" style="left:606.35px;top:562.30px;font-size:16.19px;color:#383838;font-weight:normal;font-style:normal;font-family:'Liberation Sans', sans-serif;">Substituir por</div>
<div class="r" style="left:607px;top:583px;width:308px;height:30px;background:#ffffff;border:1.5px solid #b7dad6;box-sizing:border-box;"></div>
<div class="t" style="left:614.52px;top:590.46px;font-size:16.00px;color:#333;font-weight:normal;font-style:normal;font-family:'Liberation Sans', sans-serif;">0</div>
<div class="r" style="left:623px;top:589px;width:1px;height:19px;background:#111;"></div>
<svg class="r" style="left:605px;top:644px;" width="8" height="12" viewBox="0 0 8 12"><path d="M1.5 1 L6.5 6 L1.5 11" fill="none" stroke="#555" stroke-width="1.1"/></svg>
<div class="t" style="left:618.19px;top:643.02px;font-size:15.33px;color:#383838;font-weight:normal;font-style:normal;font-family:'Liberation Sans', sans-serif;">Opções avançadas</div>
<div class="r" style="left:1281px;top:703px;width:80px;height:29px;background:#ffffff;border:2px solid #2a8a4e;box-sizing:border-box;"></div>
<div class="t" style="left:1310.66px;top:712.15px;font-size:14.00px;color:#3a3a3a;font-weight:normal;font-style:normal;font-family:'Liberation Sans', sans-serif;">OK</div>
<div class="r" style="left:1379px;top:703px;width:80px;height:29px;background:#ffffff;border:1.5px solid #cfcfcf;box-sizing:border-box;"></div>
<div class="t" style="left:1390.73px;top:712.15px;font-size:14.00px;color:#3a3a3a;font-weight:normal;font-style:normal;font-family:'Liberation Sans', sans-serif;">Cancelar</div>
<div class="r" style="left:571px;top:400px;width:496px;height:321px;background:transparent;border:5px solid #ff0000;box-sizing:border-box;"></div>
</body></html>
